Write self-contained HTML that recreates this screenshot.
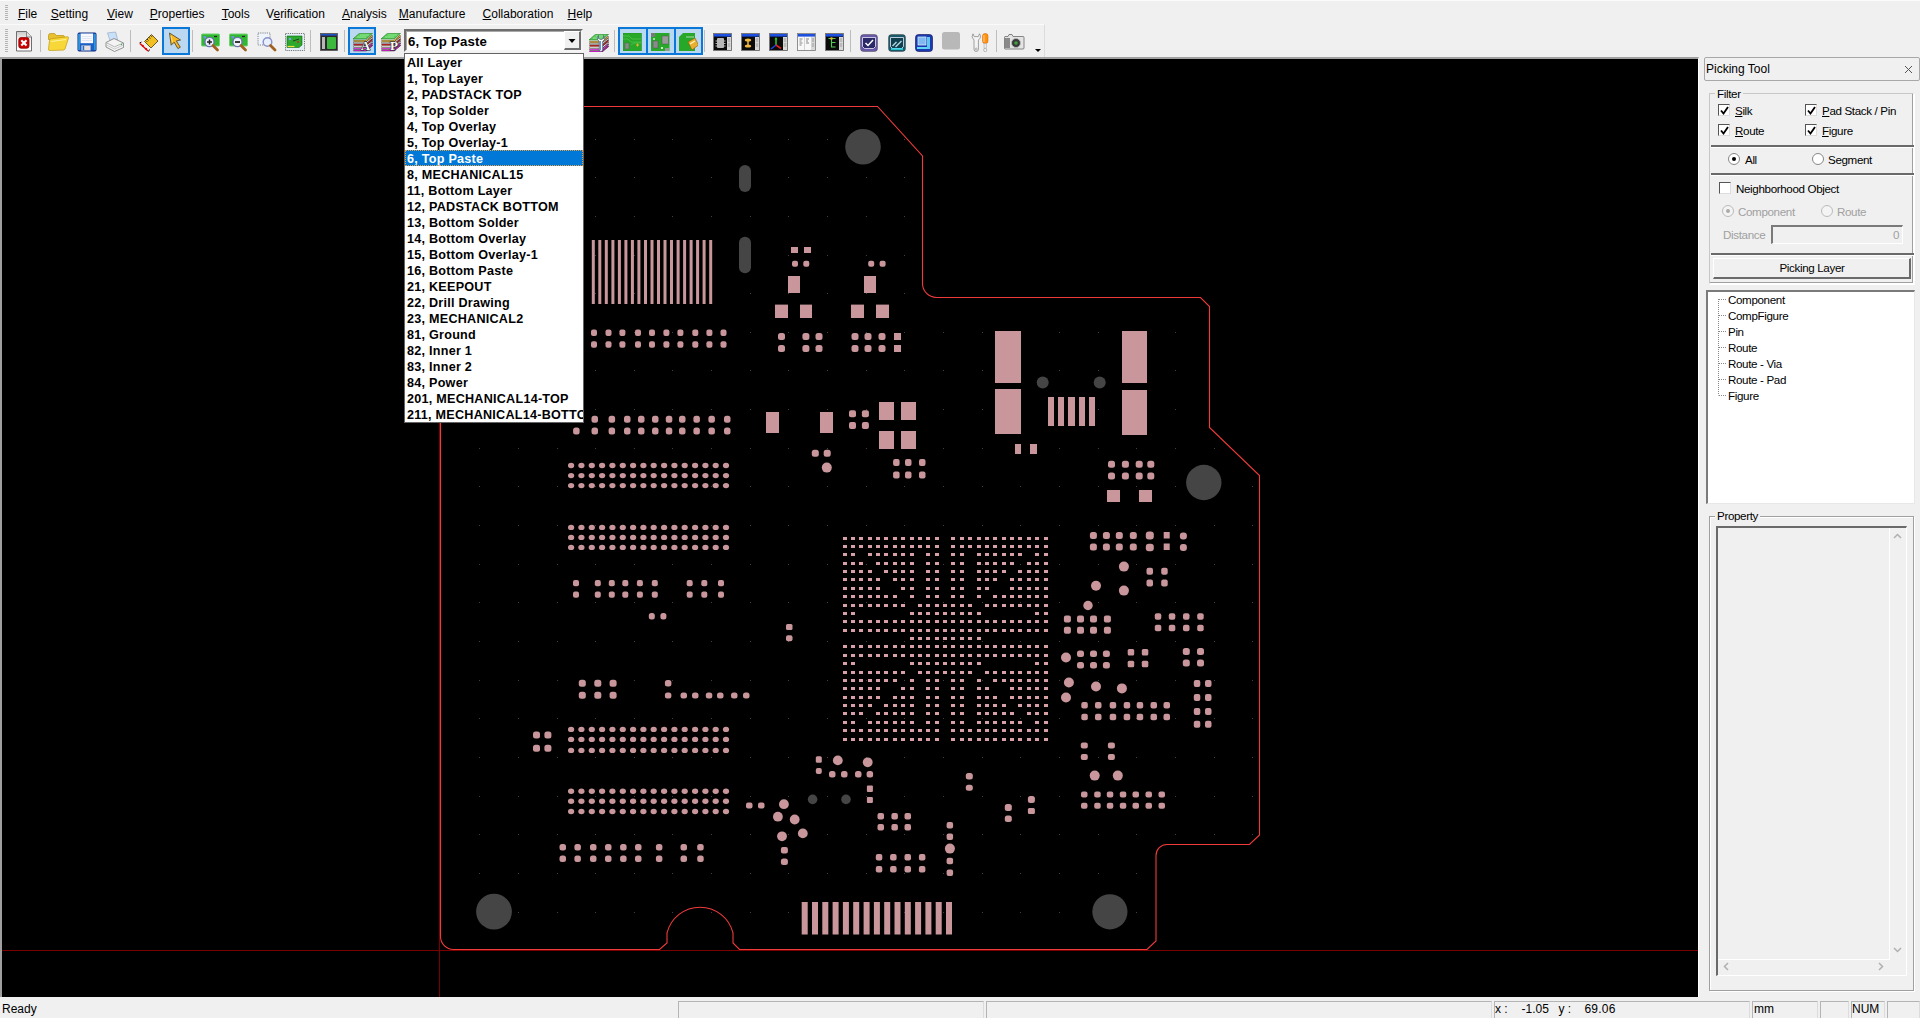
<!DOCTYPE html>
<html><head><meta charset="utf-8"><style>
*{box-sizing:border-box}
html,body{margin:0;padding:0;width:1920px;height:1018px;overflow:hidden;background:#f0f0f0;font-family:'Liberation Sans',sans-serif;}
.abs{position:absolute}
#menubar{position:absolute;left:0;top:0;width:1920px;height:24px;background:#f0f0f0;border-top:1px solid #fbfbfb}
.mi{position:absolute;top:6px;font-size:12px;color:#000;white-space:nowrap;line-height:15px}
.mi u{text-decoration:underline;text-underline-offset:1px}
.grip{position:absolute;left:5px;width:3px;border-top:none;background:repeating-linear-gradient(#b4b4b4 0 1px,transparent 1px 2px)}
#toolbar{position:absolute;left:0;top:24px;width:1045px;height:33px;background:#f0f0f0;border-top:1px solid #fafafa;border-right:1px solid #dcdcdc}
.sep{position:absolute;top:30px;width:1px;height:22px;background:#bdbdbd}
.selbtn{position:absolute;top:27px;height:28px;background:#bad8f2;border:2px solid #0a78d8}
.ic{position:absolute}
#combo{position:absolute;left:404px;top:29px;width:179px;height:23px;background:#fff;border:2px solid #f4f4f4;border-top-color:#6e6e6e;border-left-color:#6e6e6e;box-shadow:inset 1px 1px 0 #a8a8a8}
#combo .t{position:absolute;left:2px;top:3px;font-weight:bold;font-size:13.2px;letter-spacing:0.2px;color:#000;line-height:15px}
#combo .btn{position:absolute;right:0px;top:0px;width:17px;height:19px;background:#f0f0f0;border:1px solid #fff;border-right:2px solid #6e6e6e;border-bottom:2px solid #6e6e6e}
#canvas{position:absolute;left:0;top:57px;width:1699px;height:941px;background:#000;border-top:2px solid #a0a0a0;border-left:2px solid #a0a0a0;border-right:1px solid #fff;border-bottom:1px solid #fff}
#pcb{position:absolute;left:0;top:0}
#drop{position:absolute;left:404px;top:53px;width:180px;height:370px;background:#fff;border:1px solid #646464;overflow:hidden}
.li{position:absolute;left:0;width:178px;height:16px;padding-left:2px;padding-top:2px;font-weight:bold;font-size:12.6px;letter-spacing:0.25px;line-height:15px;color:#000;white-space:nowrap}
.li.sel{background:#0078d7;color:#fff;outline:1px dotted #e8a040;outline-offset:-1px}
#panel{position:absolute;left:1700px;top:57px;width:220px;height:940px;background:#f0f0f0}
.pt{position:absolute;font-size:11.6px;letter-spacing:-0.35px;color:#000;white-space:nowrap;line-height:14px}
.gray{color:#a0a0a0}
.cb{position:absolute;width:12px;height:12px;background:#fff;border:1px solid #333;border-color:#555 #ddd #ddd #555}
.rad{position:absolute;width:12px;height:12px;border-radius:50%;background:#fff;border:1px solid #888}
.hline{position:absolute;height:3px;background:#6a6a6a;border-bottom:1px solid #fff}
.ti{position:absolute;left:20px;margin-top:1px;letter-spacing:-0.35px;font-size:11.6px;line-height:14px;white-space:nowrap}
#status{position:absolute;left:0;top:997px;width:1920px;height:21px;background:#f0f0f0}
.sp{position:absolute;top:4px;height:17px;border:1px solid #b4b4b4;border-bottom:none;border-right-color:#dcdcdc}
.st{position:absolute;font-size:12px;line-height:14px;white-space:nowrap}
</style></head><body>
<div id="menubar"><div class="mi" style="left:17.900000000000002px"><u>F</u>ile</div><div class="mi" style="left:50.699999999999996px"><u>S</u>etting</div><div class="mi" style="left:107.0px"><u>V</u>iew</div><div class="mi" style="left:149.8px"><u>P</u>roperties</div><div class="mi" style="left:221.70000000000002px"><u>T</u>ools</div><div class="mi" style="left:266.1px">V<u>e</u>rification</div><div class="mi" style="left:342.0px"><u>A</u>nalysis</div><div class="mi" style="left:398.8px"><u>M</u>anufacture</div><div class="mi" style="left:482.6px"><u>C</u>ollaboration</div><div class="mi" style="left:567.5999999999999px"><u>H</u>elp</div></div>
<div class="grip" style="top:5px;height:16px"></div>
<div id="toolbar"></div>
<div class="grip" style="top:29px;height:23px"></div>
<div class="sep" style="left:40px"></div>
<div class="sep" style="left:130px"></div>
<div class="selbtn" style="left:162px;width:28px"></div>
<div class="sep" style="left:192px"></div>
<div class="sep" style="left:310px"></div>
<div class="sep" style="left:344px"></div>
<div class="selbtn" style="left:348px;width:28px"></div>
<div class="sep" style="left:614px"></div>
<div class="selbtn" style="left:618px;width:30px"></div>
<div class="selbtn" style="left:646px;width:30px"></div>
<div class="selbtn" style="left:674px;width:29px"></div>
<div class="sep" style="left:704px"></div>
<div class="sep" style="left:850px"></div>
<div class="sep" style="left:996px"></div>
<svg class="ic" style="left:15px;top:31px" width="18" height="21" viewBox="0 0 18 21"><defs><linearGradient id="pg" x1="0" y1="0" x2="0" y2="1"><stop offset="0" stop-color="#c8c8c8"/><stop offset=".4" stop-color="#f4f4f4"/><stop offset="1" stop-color="#ffffff"/></linearGradient></defs><path d="M1.5 .5h10l5 5.5v14H1.5z" fill="url(#pg)" stroke="#6e6e6e"/><path d="M11.5 .5v5.5h5" fill="#e0e0e0" stroke="#6e6e6e" stroke-width=".8"/><rect x="3.8" y="6.6" width="10.2" height="10.6" rx="2.2" fill="#d00000" stroke="#8a0000" stroke-width=".8"/><path d="M6.3 9.2l5.2 5.4M11.5 9.2l-5.2 5.4" stroke="#fff" stroke-width="2.1"/></svg><svg class="ic" style="left:47px;top:32px" width="22" height="19" viewBox="0 0 22 19"><path d="M1.5 3.5q0-2 2-2h4l2 2h6.5q1.5 0 1.5 1.5v2.5H1.5z" fill="#e8c030" stroke="#b89010" stroke-width=".7"/><path d="M2.5 8.5q.3-1.5 2-1.8l16-2q1.3 0 1 1.2L18 17q-.4 1-1.6 1.1L2.8 18.5q-1.5 0-1.3-1.5z" fill="#f8d838" stroke="#c09a10" stroke-width=".7"/><path d="M4 9.5l15-2" stroke="#fff4a0" stroke-width="1"/></svg><svg class="ic" style="left:77px;top:32px" width="20" height="20" viewBox="0 0 20 20"><rect x="1" y="1" width="18" height="18" rx="1" fill="#1a60c8" stroke="#0a2a80" stroke-width="1"/><path d="M2 2v16" stroke="#40c8f8" stroke-width="1"/><path d="M18 2v16" stroke="#40c8f8" stroke-width="1"/><rect x="3.6" y="1.5" width="12.5" height="9.7" fill="#f8f8ff"/><path d="M5 4.5h10M5 6.5h10M5 8.5h10" stroke="#d0d8e8" stroke-width=".6"/><rect x="4.3" y="13.4" width="9.4" height="5.1" fill="#e8e0e0" stroke="#7090c0" stroke-width=".5"/><rect x="5.6" y="14" width="1.6" height="4" fill="#2070d0"/></svg><svg class="ic" style="left:105px;top:31px" width="20" height="21" viewBox="0 0 20 21"><path d="M2.5 1.9L10.6 1l2 7.5-7.6 1z" fill="#c8e0f8" stroke="#8aa0c0" stroke-width=".6"/><path d="M1 11.5l8-4 9.5 4.5v4.5l-9 4-8.5-4.5z" fill="#f4f4f4" stroke="#7a7a7a" stroke-width=".8"/><path d="M1 11.5l8.5 4.3 9-3.8" fill="none" stroke="#9a9a9a" stroke-width=".7"/><path d="M1.5 14l8 4 9-4" fill="none" stroke="#b0b0b0" stroke-width=".6"/><circle cx="16.5" cy="13.5" r=".7" fill="#30c030"/></svg><svg class="ic" style="left:139px;top:31px" width="21" height="21" viewBox="0 0 21 21"><path d="M5.5 10.5l7-7 6.5 6.5-7 7z" fill="#f0c020" stroke="#4a3a10" stroke-width=".8"/><path d="M8 8l1.5 1.5M9.8 6.2l1.5 1.5M11.6 4.4l1.5 1.5M7.2 9.8l1.2 1.2" stroke="#222" stroke-width=".9"/><path d="M1 12.5l8 7.5" stroke="#e00000" stroke-width="1.4"/><path d="M.5 12l2-1M9.5 20.5l1-2" stroke="#400" stroke-width="1"/><circle cx="3.8" cy="14.8" r="1" fill="#e00000"/><circle cx="7.2" cy="18" r="1" fill="#e00000"/></svg><svg class="ic" style="left:167px;top:32px" width="18" height="18" viewBox="0 0 18 18"><path d="M2.5 1l11 7-4.2.9 4 6.3-2.4 1.4-3.7-6.4-3 3z" fill="#f8b820" stroke="#5a4a30" stroke-width=".9" stroke-linejoin="round"/><path d="M4 4l1.5 6" stroke="#ffe890" stroke-width=".8"/></svg><svg class="ic" style="left:200px;top:32px" width="21" height="21" viewBox="0 0 21 21"><rect x="1.5" y="2" width="18" height="12" rx="1" fill="#30b830" stroke="#70d070" stroke-width="1"/><rect x="3.5" y="4" width="2.5" height="2.5" fill="#7090e0"/><path d="M14 4.5h3" stroke="#222" stroke-width="1.2"/><circle cx="9.5" cy="10" r="4.6" fill="#eef2ff" stroke="#6a70b0" stroke-width="1.4"/><path d="M13 13.5l4.5 4.5" stroke="#a06020" stroke-width="2.8" stroke-linecap="round"/><path d="M7 10h5M9.5 7.5v5" stroke="#222" stroke-width="1.5"/></svg><svg class="ic" style="left:228px;top:32px" width="21" height="21" viewBox="0 0 21 21"><rect x="1.5" y="2" width="18" height="12" rx="1" fill="#30b830" stroke="#70d070" stroke-width="1"/><rect x="3.5" y="4" width="2.5" height="2.5" fill="#7090e0"/><path d="M14 4.5h3" stroke="#222" stroke-width="1.2"/><circle cx="9.5" cy="10" r="4.6" fill="#eef2ff" stroke="#6a70b0" stroke-width="1.4"/><path d="M13 13.5l4.5 4.5" stroke="#a06020" stroke-width="2.8" stroke-linecap="round"/><path d="M7 10h5" stroke="#222" stroke-width="1.8"/></svg><svg class="ic" style="left:257px;top:32px" width="21" height="21" viewBox="0 0 21 21"><rect x="1" y="1" width="12" height="12" fill="#eef4fc" stroke="#6a6a6a" stroke-width=".8" stroke-dasharray="1.2 1"/><circle cx="10.5" cy="10" r="4.3" fill="#e8f0ff" stroke="#8a90c8" stroke-width="1.4"/><path d="M13.5 13.5l4.5 4.5" stroke="#a06020" stroke-width="2.8" stroke-linecap="round"/></svg><svg class="ic" style="left:285px;top:33px" width="20" height="18" viewBox="0 0 20 18"><rect x=".5" y=".5" width="19" height="17" fill="#e4eef8" stroke="#555" stroke-width=".8" stroke-dasharray="1.2 1"/><path d="M2 3h15v9l-3 2.5H2z" fill="#2ca82c" stroke="#0a6a0a" stroke-width=".6"/><circle cx="5" cy="6" r="1.2" fill="#80a0f0"/><path d="M8 8l6-2" stroke="#222" stroke-width=".8"/><circle cx="13" cy="9" r="1" fill="#e02020"/><path d="M2.5 13.5h7" stroke="#f0e040" stroke-width="1.2"/></svg><svg class="ic" style="left:320px;top:33px" width="18" height="18" viewBox="0 0 18 18"><rect x=".5" y=".5" width="17" height="17" fill="#2a2a2a" stroke="#555" stroke-width=".8"/><rect x="1" y="1" width="16" height="1.6" fill="#2050c8"/><rect x="2" y="4" width="3" height="12" fill="#b8b8b8"/><rect x="7" y="4" width="9" height="12" rx="1" fill="#3cb83c"/></svg><svg class="ic" style="left:353px;top:33px" width="21" height="19" viewBox="0 0 21 19"><path d="M.5 17.5h12.5l6.5-5.5" fill="none" stroke="#3a2a2a" stroke-width="1.6"/><path d="M.8 17.5h12.2l6.3-5.3" fill="none" stroke="#c020c0" stroke-width="1"/><path d="M.5 15.6h12.5l6.5-5.5" fill="none" stroke="#3a2a2a" stroke-width="1.6"/><path d="M.8 15.6h12.2l6.3-5.3" fill="none" stroke="#e040e0" stroke-width="1"/><path d="M.5 13.7h12.5l6.5-5.5" fill="none" stroke="#3a2a2a" stroke-width="1.6"/><path d="M.8 13.7h12.2l6.3-5.3" fill="none" stroke="#f0f0f0" stroke-width="1"/><path d="M.5 11.8h12.5l6.5-5.5" fill="none" stroke="#3a2a2a" stroke-width="1.6"/><path d="M.8 11.8h12.2l6.3-5.3" fill="none" stroke="#e02020" stroke-width="1"/><path d="M.5 9.9h12.5l6.5-5.5" fill="none" stroke="#3a2a2a" stroke-width="1.6"/><path d="M.8 9.9h12.2l6.3-5.3" fill="none" stroke="#f0f0f0" stroke-width="1"/><path d="M.5 8.0h12.5l6.5-5.5" fill="none" stroke="#3a2a2a" stroke-width="1.6"/><path d="M.8 8.0h12.2l6.3-5.3" fill="none" stroke="#f0c020" stroke-width="1"/><path d="M0 6l6.6-5.8h13L13 6z" fill="#58d058" stroke="#2a7a2a" stroke-width=".7"/><path d="M4 4h9M7 2h9" stroke="#b8f0b8" stroke-width=".6"/><text x="7.8" y="17" font-family="Liberation Serif" font-weight="bold" font-size="13" fill="#fff" stroke="#222" stroke-width="1.2" paint-order="stroke">A</text></svg><svg class="ic" style="left:381px;top:33px" width="21" height="19" viewBox="0 0 21 19"><path d="M.5 17.5h12.5l6.5-5.5" fill="none" stroke="#3a2a2a" stroke-width="1.6"/><path d="M.8 17.5h12.2l6.3-5.3" fill="none" stroke="#c020c0" stroke-width="1"/><path d="M.5 15.6h12.5l6.5-5.5" fill="none" stroke="#3a2a2a" stroke-width="1.6"/><path d="M.8 15.6h12.2l6.3-5.3" fill="none" stroke="#e040e0" stroke-width="1"/><path d="M.5 13.7h12.5l6.5-5.5" fill="none" stroke="#3a2a2a" stroke-width="1.6"/><path d="M.8 13.7h12.2l6.3-5.3" fill="none" stroke="#f0f0f0" stroke-width="1"/><path d="M.5 11.8h12.5l6.5-5.5" fill="none" stroke="#3a2a2a" stroke-width="1.6"/><path d="M.8 11.8h12.2l6.3-5.3" fill="none" stroke="#e02020" stroke-width="1"/><path d="M.5 9.9h12.5l6.5-5.5" fill="none" stroke="#3a2a2a" stroke-width="1.6"/><path d="M.8 9.9h12.2l6.3-5.3" fill="none" stroke="#f0f0f0" stroke-width="1"/><path d="M.5 8.0h12.5l6.5-5.5" fill="none" stroke="#3a2a2a" stroke-width="1.6"/><path d="M.8 8.0h12.2l6.3-5.3" fill="none" stroke="#f0c020" stroke-width="1"/><path d="M0 6l6.6-5.8h13L13 6z" fill="#58d058" stroke="#2a7a2a" stroke-width=".7"/><path d="M4 4h9M7 2h9" stroke="#b8f0b8" stroke-width=".6"/><text x="9" y="17" font-family="Liberation Serif" font-weight="bold" font-size="13" fill="#fff" stroke="#222" stroke-width="1.2" paint-order="stroke">P</text></svg><svg class="ic" style="left:589px;top:34px" width="21" height="18" viewBox="0 0 21 18"><path d="M.5 17.5h12.5l6.5-5.5" fill="none" stroke="#3a2a2a" stroke-width="1.6"/><path d="M.8 17.5h12.2l6.3-5.3" fill="none" stroke="#c020c0" stroke-width="1"/><path d="M.5 15.6h12.5l6.5-5.5" fill="none" stroke="#3a2a2a" stroke-width="1.6"/><path d="M.8 15.6h12.2l6.3-5.3" fill="none" stroke="#e040e0" stroke-width="1"/><path d="M.5 13.7h12.5l6.5-5.5" fill="none" stroke="#3a2a2a" stroke-width="1.6"/><path d="M.8 13.7h12.2l6.3-5.3" fill="none" stroke="#f0f0f0" stroke-width="1"/><path d="M.5 11.8h12.5l6.5-5.5" fill="none" stroke="#3a2a2a" stroke-width="1.6"/><path d="M.8 11.8h12.2l6.3-5.3" fill="none" stroke="#e02020" stroke-width="1"/><path d="M.5 9.9h12.5l6.5-5.5" fill="none" stroke="#3a2a2a" stroke-width="1.6"/><path d="M.8 9.9h12.2l6.3-5.3" fill="none" stroke="#f0f0f0" stroke-width="1"/><path d="M.5 8.0h12.5l6.5-5.5" fill="none" stroke="#3a2a2a" stroke-width="1.6"/><path d="M.8 8.0h12.2l6.3-5.3" fill="none" stroke="#f0c020" stroke-width="1"/><path d="M0 6l6.6-5.8h13L13 6z" fill="#58d058" stroke="#2a7a2a" stroke-width=".7"/><path d="M4 4h9M7 2h9" stroke="#b8f0b8" stroke-width=".6"/><path d="M9.5 1.5q-2 1-1 4l1.8 2v8q0 2 1.7 2 1.7 0 1.7-2v-8l1.8-2q1-3-1-4v3l-2.5 1-2.5-1z" fill="#f8f8f8" stroke="#3a4a70" stroke-width=".7"/><path d="M11.5 7v9" stroke="#5a9ae0" stroke-width="1"/></svg><svg class="ic" style="left:623px;top:33px" width="19" height="18" viewBox="0 0 19 18"><rect x="0" y="0" width="18.5" height="18" fill="#28a828" stroke="#1a8a1a" stroke-width=".5"/><path d="M0 3h6l3 3h9M0 6h5l3 3h10M8 12l3-2h7" stroke="#50c850" stroke-width=".7" fill="none"/><rect x="2" y="10" width="4" height="6" fill="#8a8a8a" stroke="#555" stroke-width=".4"/><path d="M14.5 10.5v3M13 12h3" stroke="#f0b030" stroke-width="1"/></svg><svg class="ic" style="left:651px;top:33px" width="19" height="18" viewBox="0 0 19 18"><rect x="0" y="0" width="18.5" height="18" fill="#28a828"/><rect x="0" y="0" width="4" height="4" fill="#7a7a7a"/><rect x="11" y="3" width="6.5" height="8" fill="#9a9a9a" stroke="#555" stroke-width=".5"/><rect x="2" y="8" width="5" height="7" fill="#8a8a8a" stroke="#555" stroke-width=".5"/><circle cx="3" cy="6" r="1" fill="#c0f0c0"/><circle cx="11" cy="15" r="1" fill="#fff"/><rect x="14" y="15" width="4" height="3" fill="#9a9a9a"/></svg><svg class="ic" style="left:679px;top:33px" width="19" height="18" viewBox="0 0 19 18"><path d="M4 0h12v18H0V4z" fill="#28a828"/><path d="M7 4h8" stroke="#9ad09a" stroke-width="1.2"/><path d="M9 9l7-4 3.5 7-6.5 5z" fill="#e8b030" stroke="#8a5a10" stroke-width=".6"/><path d="M11 11l5-3" stroke="#fff6c0" stroke-width="1.3"/></svg><svg class="ic" style="left:713px;top:33px" width="19" height="18" viewBox="0 0 19 18"><rect x=".5" y=".5" width="18" height="17" fill="#0a0a0a" stroke="#777" stroke-width=".8"/><rect x="1" y="1" width="17" height="2.6" fill="#1e50e0"/><rect x="14" y="4" width="4" height="13" fill="#d8d8d8"/><path d="M14.8 6h2.4M14.8 8h2.4M14.8 11h2.4M14.8 13h2.4" stroke="#777" stroke-width=".6"/><rect x="4" y="5" width="7" height="10" rx="1" fill="#b8b8b8"/><path d="M2.5 8h1.5M2.5 10.5h1.5M2.5 13h1.5M11 8h1.5M11 10.5h1.5M11 13h1.5" stroke="#ddd" stroke-width=".8"/></svg><svg class="ic" style="left:741px;top:33px" width="19" height="18" viewBox="0 0 19 18"><rect x=".5" y=".5" width="18" height="17" fill="#0a0a0a" stroke="#777" stroke-width=".8"/><rect x="1" y="1" width="17" height="2.6" fill="#1e50e0"/><rect x="14" y="4" width="4" height="13" fill="#d8d8d8"/><path d="M14.8 6h2.4M14.8 8h2.4M14.8 11h2.4M14.8 13h2.4" stroke="#777" stroke-width=".6"/><ellipse cx="7" cy="7" rx="3.2" ry="1.6" fill="#f0b840"/><ellipse cx="7" cy="13" rx="3.2" ry="1.6" fill="#f0b840"/><path d="M7 8v4" stroke="#f0b840" stroke-width="1.5"/></svg><svg class="ic" style="left:769px;top:33px" width="19" height="18" viewBox="0 0 19 18"><rect x=".5" y=".5" width="18" height="17" fill="#0a0a0a" stroke="#777" stroke-width=".8"/><rect x="1" y="1" width="17" height="2.6" fill="#1e50e0"/><rect x="14" y="4" width="4" height="13" fill="#d8d8d8"/><path d="M14.8 6h2.4M14.8 8h2.4M14.8 11h2.4M14.8 13h2.4" stroke="#777" stroke-width=".6"/><path d="M7 12V5" stroke="#30c030" stroke-width="1.6"/><path d="M5.5 6.5L7 4l1.5 2.5z" fill="#30c030"/><path d="M7 12l-5 4" stroke="#2040e0" stroke-width="1.6"/><path d="M7 12l5 3.5" stroke="#e02020" stroke-width="1.6"/></svg><svg class="ic" style="left:797px;top:33px" width="19" height="18" viewBox="0 0 19 18"><rect x=".5" y=".5" width="18" height="17" fill="#f0f0f0" stroke="#777" stroke-width=".8"/><rect x="1" y="1" width="17" height="2.6" fill="#1e50e0"/><rect x="14" y="4" width="4" height="13" fill="#d8d8d8"/><path d="M14.8 6h2.4M14.8 8h2.4M14.8 11h2.4M14.8 13h2.4" stroke="#777" stroke-width=".6"/><rect x="1" y="4" width="13" height="13" fill="#f8f8f8"/><path d="M7.5 4v13" stroke="#bbb" stroke-width=".6"/><path d="M2.5 6h3M2.5 8h2M2.5 10h3M2.5 12h2M9 6h3M9 8h2M9 10h3" stroke="#555" stroke-width=".7"/></svg><svg class="ic" style="left:825px;top:33px" width="19" height="18" viewBox="0 0 19 18"><rect x=".5" y=".5" width="18" height="17" fill="#0a0a0a" stroke="#777" stroke-width=".8"/><rect x="1" y="1" width="17" height="2.6" fill="#1e50e0"/><rect x="14" y="4" width="4" height="13" fill="#d8d8d8"/><path d="M14.8 6h2.4M14.8 8h2.4M14.8 11h2.4M14.8 13h2.4" stroke="#777" stroke-width=".6"/><path d="M3.5 5.5h7M6.5 5.5v9M6.5 9.5h4M6.5 14h4" stroke="#50d050" stroke-width="1.1" fill="none"/><circle cx="6.5" cy="5.5" r="1.3" fill="#f0b030"/></svg><svg class="ic" style="left:860px;top:34px" width="18" height="18" viewBox="0 0 18 18"><rect x=".5" y=".5" width="17" height="17" rx="3" fill="#6a58a8" stroke="#333" stroke-width=".4"/><path d="M2.5 3.5h13v9l-2 2h-9l-2-2z" fill="#2a2a68" stroke="#e8e8f8" stroke-width=".8"/><path d="M5.5 9l2.5 2.5 5-5.5" stroke="#fff" stroke-width="1.5" fill="none"/></svg><svg class="ic" style="left:888px;top:34px" width="18" height="18" viewBox="0 0 18 18"><rect x=".5" y=".5" width="17" height="17" rx="3" fill="#1a5a68" stroke="#333" stroke-width=".4"/><path d="M2.5 3.5h13v9l-2 2h-9l-2-2z" fill="#104050" stroke="#e8e8f8" stroke-width=".8"/><path d="M4.5 12l4-4M7.5 13l6-6" stroke="#b0d8e0" stroke-width="1.4"/><path d="M3 15h12" stroke="#30e0f0" stroke-width="1.5"/></svg><svg class="ic" style="left:915px;top:34px" width="18" height="18" viewBox="0 0 18 18"><rect x=".5" y=".5" width="17" height="17" rx="3" fill="#1a3ab0" stroke="#0a0a50" stroke-width=".6"/><rect x="3" y="3" width="8" height="8" fill="#80b8f0" stroke="#d0e8ff" stroke-width=".8"/><rect x="12" y="3" width="3" height="12" fill="#60c8f0"/><path d="M2 14h10" stroke="#60d8f8" stroke-width="2"/></svg><svg class="ic" style="left:942px;top:32px" width="18" height="18" viewBox="0 0 18 18"><rect x="0" y="0" width="18" height="17.5" rx="2.5" fill="#b8b8b8"/></svg><svg class="ic" style="left:971px;top:33px" width="19" height="19" viewBox="0 0 19 19"><path d="M2 .8Q-.5 4 3 7v9q0 2.5 2.2 2.5T7.4 16V7Q11 4 8.5.8L7.3 3.6H3.2z" fill="#f4f4f4" stroke="#8a8a8a" stroke-width=".8"/><circle cx="5.2" cy="16" r="1" fill="none" stroke="#888" stroke-width=".6"/><rect x="11.5" y=".5" width="5.5" height="10" rx="2.5" fill="#ff9010" stroke="#d06000" stroke-width=".5"/><path d="M13 2v7" stroke="#ffd080" stroke-width="1"/><rect x="13" y="10.5" width="2.5" height="5" fill="#e8e8e8" stroke="#999" stroke-width=".4"/><ellipse cx="14.2" cy="17" rx="1.6" ry="1.8" fill="#f0f0f0" stroke="#888" stroke-width=".5"/></svg><svg class="ic" style="left:1004px;top:33px" width="21" height="17" viewBox="0 0 21 17"><path d="M1 3.5h3l1-2h3l1 2h10q1 0 1 1V15q0 1-1 1H1q-.5 0-.5-1V4.5q0-1 .5-1z" fill="#e4e4e4" stroke="#6a6a6a" stroke-width=".8"/><rect x="1" y="5" width="5" height="10" fill="#8a8a8a"/><circle cx="12" cy="10" r="4.5" fill="#3a3a3a" stroke="#bbb" stroke-width=".8"/><circle cx="12" cy="10" r="1.8" fill="#40a040"/></svg>
<svg class="ic" style="left:1035px;top:49px" width="6" height="4"><path d="M0 0h6L3 3z" fill="#000"/></svg>
<div id="combo"><div class="t">6, Top Paste</div><div class="btn"><svg width="15" height="16" style="position:absolute;left:0;top:0"><path d="M3.5 7h7l-3.5 4z" fill="#000"/></svg></div></div>
<div id="canvas"></div>
<svg id="pcb" width="1920" height="1018" style="position:absolute;left:0;top:0">
<path d="M2 950.5H1698" stroke="#7a0000" stroke-width="1"/>
<path d="M439.5 59V997" stroke="#7a0000" stroke-width="1"/>
<path d="M479 912h1v1h-1z M479 873h1v1h-1z M479 834h1v1h-1z M479 796h1v1h-1z M479 757h1v1h-1z M479 718h1v1h-1z M479 680h1v1h-1z M479 641h1v1h-1z M479 602h1v1h-1z M479 564h1v1h-1z M479 525h1v1h-1z M479 486h1v1h-1z M479 448h1v1h-1z M479 409h1v1h-1z M479 370h1v1h-1z M479 332h1v1h-1z M479 293h1v1h-1z M479 255h1v1h-1z M479 216h1v1h-1z M479 177h1v1h-1z M479 139h1v1h-1z M518 912h1v1h-1z M518 873h1v1h-1z M518 834h1v1h-1z M518 796h1v1h-1z M518 757h1v1h-1z M518 718h1v1h-1z M518 680h1v1h-1z M518 641h1v1h-1z M518 602h1v1h-1z M518 564h1v1h-1z M518 525h1v1h-1z M518 486h1v1h-1z M518 448h1v1h-1z M518 409h1v1h-1z M518 370h1v1h-1z M518 332h1v1h-1z M518 293h1v1h-1z M518 255h1v1h-1z M518 216h1v1h-1z M518 177h1v1h-1z M518 139h1v1h-1z M557 912h1v1h-1z M557 873h1v1h-1z M557 834h1v1h-1z M557 796h1v1h-1z M557 757h1v1h-1z M557 718h1v1h-1z M557 680h1v1h-1z M557 641h1v1h-1z M557 602h1v1h-1z M557 564h1v1h-1z M557 525h1v1h-1z M557 486h1v1h-1z M557 448h1v1h-1z M557 409h1v1h-1z M557 370h1v1h-1z M557 332h1v1h-1z M557 293h1v1h-1z M557 255h1v1h-1z M557 216h1v1h-1z M557 177h1v1h-1z M557 139h1v1h-1z M595 912h1v1h-1z M595 873h1v1h-1z M595 834h1v1h-1z M595 796h1v1h-1z M595 757h1v1h-1z M595 718h1v1h-1z M595 680h1v1h-1z M595 641h1v1h-1z M595 602h1v1h-1z M595 564h1v1h-1z M595 525h1v1h-1z M595 486h1v1h-1z M595 448h1v1h-1z M595 409h1v1h-1z M595 370h1v1h-1z M595 332h1v1h-1z M595 293h1v1h-1z M595 255h1v1h-1z M595 216h1v1h-1z M595 177h1v1h-1z M595 139h1v1h-1z M634 912h1v1h-1z M634 873h1v1h-1z M634 834h1v1h-1z M634 796h1v1h-1z M634 757h1v1h-1z M634 718h1v1h-1z M634 680h1v1h-1z M634 641h1v1h-1z M634 602h1v1h-1z M634 564h1v1h-1z M634 525h1v1h-1z M634 486h1v1h-1z M634 448h1v1h-1z M634 409h1v1h-1z M634 370h1v1h-1z M634 332h1v1h-1z M634 293h1v1h-1z M634 255h1v1h-1z M634 216h1v1h-1z M634 177h1v1h-1z M634 139h1v1h-1z M672 912h1v1h-1z M672 873h1v1h-1z M672 834h1v1h-1z M672 796h1v1h-1z M672 757h1v1h-1z M672 718h1v1h-1z M672 680h1v1h-1z M672 641h1v1h-1z M672 602h1v1h-1z M672 564h1v1h-1z M672 525h1v1h-1z M672 486h1v1h-1z M672 448h1v1h-1z M672 409h1v1h-1z M672 370h1v1h-1z M672 332h1v1h-1z M672 293h1v1h-1z M672 255h1v1h-1z M672 216h1v1h-1z M672 177h1v1h-1z M672 139h1v1h-1z M711 912h1v1h-1z M711 873h1v1h-1z M711 834h1v1h-1z M711 796h1v1h-1z M711 757h1v1h-1z M711 718h1v1h-1z M711 680h1v1h-1z M711 641h1v1h-1z M711 602h1v1h-1z M711 564h1v1h-1z M711 525h1v1h-1z M711 486h1v1h-1z M711 448h1v1h-1z M711 409h1v1h-1z M711 370h1v1h-1z M711 332h1v1h-1z M711 293h1v1h-1z M711 255h1v1h-1z M711 216h1v1h-1z M711 177h1v1h-1z M711 139h1v1h-1z M750 912h1v1h-1z M750 873h1v1h-1z M750 834h1v1h-1z M750 796h1v1h-1z M750 757h1v1h-1z M750 718h1v1h-1z M750 680h1v1h-1z M750 641h1v1h-1z M750 602h1v1h-1z M750 564h1v1h-1z M750 525h1v1h-1z M750 486h1v1h-1z M750 448h1v1h-1z M750 409h1v1h-1z M750 370h1v1h-1z M750 332h1v1h-1z M750 293h1v1h-1z M750 255h1v1h-1z M750 216h1v1h-1z M750 177h1v1h-1z M750 139h1v1h-1z M788 912h1v1h-1z M788 873h1v1h-1z M788 834h1v1h-1z M788 796h1v1h-1z M788 757h1v1h-1z M788 718h1v1h-1z M788 680h1v1h-1z M788 641h1v1h-1z M788 602h1v1h-1z M788 564h1v1h-1z M788 525h1v1h-1z M788 486h1v1h-1z M788 448h1v1h-1z M788 409h1v1h-1z M788 370h1v1h-1z M788 332h1v1h-1z M788 293h1v1h-1z M788 255h1v1h-1z M788 216h1v1h-1z M788 177h1v1h-1z M788 139h1v1h-1z M827 912h1v1h-1z M827 873h1v1h-1z M827 834h1v1h-1z M827 796h1v1h-1z M827 757h1v1h-1z M827 718h1v1h-1z M827 680h1v1h-1z M827 641h1v1h-1z M827 602h1v1h-1z M827 564h1v1h-1z M827 525h1v1h-1z M827 486h1v1h-1z M827 448h1v1h-1z M827 409h1v1h-1z M827 370h1v1h-1z M827 332h1v1h-1z M827 293h1v1h-1z M827 255h1v1h-1z M827 216h1v1h-1z M827 177h1v1h-1z M827 139h1v1h-1z M866 912h1v1h-1z M866 873h1v1h-1z M866 834h1v1h-1z M866 796h1v1h-1z M866 757h1v1h-1z M866 718h1v1h-1z M866 680h1v1h-1z M866 641h1v1h-1z M866 602h1v1h-1z M866 564h1v1h-1z M866 525h1v1h-1z M866 486h1v1h-1z M866 448h1v1h-1z M866 409h1v1h-1z M866 370h1v1h-1z M866 332h1v1h-1z M866 293h1v1h-1z M866 255h1v1h-1z M866 216h1v1h-1z M866 177h1v1h-1z M866 139h1v1h-1z M904 912h1v1h-1z M904 873h1v1h-1z M904 834h1v1h-1z M904 796h1v1h-1z M904 757h1v1h-1z M904 718h1v1h-1z M904 680h1v1h-1z M904 641h1v1h-1z M904 602h1v1h-1z M904 564h1v1h-1z M904 525h1v1h-1z M904 486h1v1h-1z M904 448h1v1h-1z M904 409h1v1h-1z M904 370h1v1h-1z M904 332h1v1h-1z M904 293h1v1h-1z M904 255h1v1h-1z M904 216h1v1h-1z M904 177h1v1h-1z M904 139h1v1h-1z M943 912h1v1h-1z M943 873h1v1h-1z M943 834h1v1h-1z M943 796h1v1h-1z M943 757h1v1h-1z M943 718h1v1h-1z M943 680h1v1h-1z M943 641h1v1h-1z M943 602h1v1h-1z M943 564h1v1h-1z M943 525h1v1h-1z M943 486h1v1h-1z M943 448h1v1h-1z M943 409h1v1h-1z M943 370h1v1h-1z M943 332h1v1h-1z M982 912h1v1h-1z M982 873h1v1h-1z M982 834h1v1h-1z M982 796h1v1h-1z M982 757h1v1h-1z M982 718h1v1h-1z M982 680h1v1h-1z M982 641h1v1h-1z M982 602h1v1h-1z M982 564h1v1h-1z M982 525h1v1h-1z M982 486h1v1h-1z M982 448h1v1h-1z M982 409h1v1h-1z M982 370h1v1h-1z M982 332h1v1h-1z M1020 912h1v1h-1z M1020 873h1v1h-1z M1020 834h1v1h-1z M1020 796h1v1h-1z M1020 757h1v1h-1z M1020 718h1v1h-1z M1020 680h1v1h-1z M1020 641h1v1h-1z M1020 602h1v1h-1z M1020 564h1v1h-1z M1020 525h1v1h-1z M1020 486h1v1h-1z M1020 448h1v1h-1z M1020 409h1v1h-1z M1020 370h1v1h-1z M1020 332h1v1h-1z M1059 912h1v1h-1z M1059 873h1v1h-1z M1059 834h1v1h-1z M1059 796h1v1h-1z M1059 757h1v1h-1z M1059 718h1v1h-1z M1059 680h1v1h-1z M1059 641h1v1h-1z M1059 602h1v1h-1z M1059 564h1v1h-1z M1059 525h1v1h-1z M1059 486h1v1h-1z M1059 448h1v1h-1z M1059 409h1v1h-1z M1059 370h1v1h-1z M1059 332h1v1h-1z M1098 912h1v1h-1z M1098 873h1v1h-1z M1098 834h1v1h-1z M1098 796h1v1h-1z M1098 757h1v1h-1z M1098 718h1v1h-1z M1098 680h1v1h-1z M1098 641h1v1h-1z M1098 602h1v1h-1z M1098 564h1v1h-1z M1098 525h1v1h-1z M1098 486h1v1h-1z M1098 448h1v1h-1z M1098 409h1v1h-1z M1098 370h1v1h-1z M1098 332h1v1h-1z M1136 912h1v1h-1z M1136 873h1v1h-1z M1136 834h1v1h-1z M1136 796h1v1h-1z M1136 757h1v1h-1z M1136 718h1v1h-1z M1136 680h1v1h-1z M1136 641h1v1h-1z M1136 602h1v1h-1z M1136 564h1v1h-1z M1136 525h1v1h-1z M1136 486h1v1h-1z M1136 448h1v1h-1z M1136 409h1v1h-1z M1136 370h1v1h-1z M1136 332h1v1h-1z M1175 834h1v1h-1z M1175 796h1v1h-1z M1175 757h1v1h-1z M1175 718h1v1h-1z M1175 680h1v1h-1z M1175 641h1v1h-1z M1175 602h1v1h-1z M1175 564h1v1h-1z M1175 525h1v1h-1z M1175 486h1v1h-1z M1175 448h1v1h-1z M1175 409h1v1h-1z M1175 370h1v1h-1z M1175 332h1v1h-1z M1214 834h1v1h-1z M1214 796h1v1h-1z M1214 757h1v1h-1z M1214 718h1v1h-1z M1214 680h1v1h-1z M1214 641h1v1h-1z M1214 602h1v1h-1z M1214 564h1v1h-1z M1214 525h1v1h-1z M1214 486h1v1h-1z M1214 448h1v1h-1z M1252 834h1v1h-1z M1252 796h1v1h-1z M1252 757h1v1h-1z M1252 718h1v1h-1z M1252 680h1v1h-1z M1252 641h1v1h-1z M1252 602h1v1h-1z M1252 564h1v1h-1z M1252 525h1v1h-1z M1252 486h1v1h-1z" fill="#404040" shape-rendering="crispEdges"/>
<circle cx="863.0" cy="146.7" r="17.8" fill="#454545"/>
<circle cx="494.0" cy="911.6" r="17.9" fill="#454545"/>
<circle cx="1109.9" cy="911.8" r="17.6" fill="#454545"/>
<circle cx="1203.8" cy="482.5" r="17.7" fill="#454545"/>
<rect x="739.0" y="165.0" width="12.0" height="27.0" rx="6" fill="#454545"/>
<rect x="739.0" y="236.8" width="12.0" height="36.5" rx="6" fill="#454545"/>
<circle cx="1042.7" cy="382.6" r="6.0" fill="#454545"/>
<circle cx="1099.7" cy="382.6" r="6.0" fill="#454545"/>
<circle cx="812.6" cy="799.4" r="4.8" fill="#454545"/>
<circle cx="846.0" cy="799.4" r="4.8" fill="#454545"/>
<rect x="591.8" y="240.0" width="3.0" height="64.0" fill="#c9979b"/>
<rect x="598.3" y="240.0" width="3.0" height="64.0" fill="#c9979b"/>
<rect x="604.8" y="240.0" width="3.0" height="64.0" fill="#c9979b"/>
<rect x="611.4" y="240.0" width="3.0" height="64.0" fill="#c9979b"/>
<rect x="617.9" y="240.0" width="3.0" height="64.0" fill="#c9979b"/>
<rect x="624.4" y="240.0" width="3.0" height="64.0" fill="#c9979b"/>
<rect x="630.9" y="240.0" width="3.0" height="64.0" fill="#c9979b"/>
<rect x="637.4" y="240.0" width="3.0" height="64.0" fill="#c9979b"/>
<rect x="644.0" y="240.0" width="3.0" height="64.0" fill="#c9979b"/>
<rect x="650.5" y="240.0" width="3.0" height="64.0" fill="#c9979b"/>
<rect x="657.0" y="240.0" width="3.0" height="64.0" fill="#c9979b"/>
<rect x="663.5" y="240.0" width="3.0" height="64.0" fill="#c9979b"/>
<rect x="670.0" y="240.0" width="3.0" height="64.0" fill="#c9979b"/>
<rect x="676.6" y="240.0" width="3.0" height="64.0" fill="#c9979b"/>
<rect x="683.1" y="240.0" width="3.0" height="64.0" fill="#c9979b"/>
<rect x="689.6" y="240.0" width="3.0" height="64.0" fill="#c9979b"/>
<rect x="696.1" y="240.0" width="3.0" height="64.0" fill="#c9979b"/>
<rect x="702.6" y="240.0" width="3.0" height="64.0" fill="#c9979b"/>
<rect x="709.2" y="240.0" width="3.0" height="64.0" fill="#c9979b"/>
<rect x="801.7" y="902.0" width="6.0" height="32.5" fill="#c9979b"/>
<rect x="812.0" y="902.0" width="6.0" height="32.5" fill="#c9979b"/>
<rect x="822.3" y="902.0" width="6.0" height="32.5" fill="#c9979b"/>
<rect x="832.6" y="902.0" width="6.0" height="32.5" fill="#c9979b"/>
<rect x="842.9" y="902.0" width="6.0" height="32.5" fill="#c9979b"/>
<rect x="853.2" y="902.0" width="6.0" height="32.5" fill="#c9979b"/>
<rect x="863.6" y="902.0" width="6.0" height="32.5" fill="#c9979b"/>
<rect x="873.9" y="902.0" width="6.0" height="32.5" fill="#c9979b"/>
<rect x="884.2" y="902.0" width="6.0" height="32.5" fill="#c9979b"/>
<rect x="894.5" y="902.0" width="6.0" height="32.5" fill="#c9979b"/>
<rect x="904.8" y="902.0" width="6.0" height="32.5" fill="#c9979b"/>
<rect x="915.1" y="902.0" width="6.0" height="32.5" fill="#c9979b"/>
<rect x="925.4" y="902.0" width="6.0" height="32.5" fill="#c9979b"/>
<rect x="935.7" y="902.0" width="6.0" height="32.5" fill="#c9979b"/>
<rect x="946.0" y="902.0" width="6.0" height="32.5" fill="#c9979b"/>
<rect x="1048.0" y="397.0" width="6.0" height="29.0" fill="#c9979b"/>
<rect x="1058.0" y="397.0" width="6.0" height="29.0" fill="#c9979b"/>
<rect x="1068.0" y="397.0" width="7.0" height="29.0" fill="#c9979b"/>
<rect x="1079.0" y="397.0" width="6.0" height="29.0" fill="#c9979b"/>
<rect x="1089.0" y="397.0" width="6.0" height="29.0" fill="#c9979b"/>
<rect x="995.0" y="331.0" width="26.0" height="52.0" fill="#c9979b"/>
<rect x="995.0" y="389.0" width="26.0" height="45.0" fill="#c9979b"/>
<rect x="1122.0" y="331.0" width="25.0" height="52.0" fill="#c9979b"/>
<rect x="1122.0" y="390.0" width="25.0" height="45.0" fill="#c9979b"/>
<rect x="1015.0" y="444.0" width="6.0" height="10.0" fill="#c9979b"/>
<rect x="1030.0" y="444.0" width="7.0" height="10.0" fill="#c9979b"/>
<rect x="591.0" y="329.6" width="6.0" height="6.5" rx="2" fill="#c9979b"/>
<rect x="591.0" y="341.2" width="6.0" height="6.5" rx="2" fill="#c9979b"/>
<rect x="605.5" y="329.6" width="6.0" height="6.5" rx="2" fill="#c9979b"/>
<rect x="605.5" y="341.2" width="6.0" height="6.5" rx="2" fill="#c9979b"/>
<rect x="619.4" y="329.6" width="6.0" height="6.5" rx="2" fill="#c9979b"/>
<rect x="619.4" y="341.2" width="6.0" height="6.5" rx="2" fill="#c9979b"/>
<rect x="635.0" y="329.6" width="6.0" height="6.5" rx="2" fill="#c9979b"/>
<rect x="635.0" y="341.2" width="6.0" height="6.5" rx="2" fill="#c9979b"/>
<rect x="649.0" y="329.6" width="6.0" height="6.5" rx="2" fill="#c9979b"/>
<rect x="649.0" y="341.2" width="6.0" height="6.5" rx="2" fill="#c9979b"/>
<rect x="663.4" y="329.6" width="6.0" height="6.5" rx="2" fill="#c9979b"/>
<rect x="663.4" y="341.2" width="6.0" height="6.5" rx="2" fill="#c9979b"/>
<rect x="677.4" y="329.6" width="6.0" height="6.5" rx="2" fill="#c9979b"/>
<rect x="677.4" y="341.2" width="6.0" height="6.5" rx="2" fill="#c9979b"/>
<rect x="692.3" y="329.6" width="6.0" height="6.5" rx="2" fill="#c9979b"/>
<rect x="692.3" y="341.2" width="6.0" height="6.5" rx="2" fill="#c9979b"/>
<rect x="706.4" y="329.6" width="6.0" height="6.5" rx="2" fill="#c9979b"/>
<rect x="706.4" y="341.2" width="6.0" height="6.5" rx="2" fill="#c9979b"/>
<rect x="720.5" y="329.6" width="6.0" height="6.5" rx="2" fill="#c9979b"/>
<rect x="720.5" y="341.2" width="6.0" height="6.5" rx="2" fill="#c9979b"/>
<rect x="791.0" y="247.0" width="7.0" height="6.0" fill="#c9979b"/>
<rect x="804.0" y="247.0" width="7.0" height="6.0" fill="#c9979b"/>
<rect x="792.0" y="260.8" width="6.0" height="6.0" rx="2" fill="#c9979b"/>
<rect x="803.3" y="260.8" width="6.0" height="6.0" rx="2" fill="#c9979b"/>
<rect x="788.0" y="276.0" width="12.0" height="17.0" fill="#c9979b"/>
<rect x="775.0" y="304.6" width="13.0" height="13.4" fill="#c9979b"/>
<rect x="800.0" y="304.6" width="12.0" height="13.4" fill="#c9979b"/>
<rect x="778.0" y="333.1" width="7.0" height="7.0" rx="2.5" fill="#c9979b"/>
<rect x="778.0" y="344.9" width="7.0" height="7.0" rx="2.5" fill="#c9979b"/>
<rect x="802.4" y="333.1" width="7.0" height="7.0" rx="2.5" fill="#c9979b"/>
<rect x="802.4" y="344.9" width="7.0" height="7.0" rx="2.5" fill="#c9979b"/>
<rect x="815.5" y="333.1" width="7.0" height="7.0" rx="2.5" fill="#c9979b"/>
<rect x="815.5" y="344.9" width="7.0" height="7.0" rx="2.5" fill="#c9979b"/>
<rect x="868.2" y="260.8" width="6.0" height="6.0" rx="2" fill="#c9979b"/>
<rect x="879.6" y="260.8" width="6.0" height="6.0" rx="2" fill="#c9979b"/>
<rect x="864.0" y="276.0" width="12.0" height="17.0" fill="#c9979b"/>
<rect x="851.0" y="304.6" width="13.0" height="13.4" fill="#c9979b"/>
<rect x="876.0" y="304.6" width="13.0" height="13.4" fill="#c9979b"/>
<rect x="851.5" y="333.1" width="7.0" height="7.0" rx="2.5" fill="#c9979b"/>
<rect x="851.5" y="344.9" width="7.0" height="7.0" rx="2.5" fill="#c9979b"/>
<rect x="864.5" y="333.1" width="7.0" height="7.0" rx="2.5" fill="#c9979b"/>
<rect x="864.5" y="344.9" width="7.0" height="7.0" rx="2.5" fill="#c9979b"/>
<rect x="878.5" y="333.1" width="7.0" height="7.0" rx="2.5" fill="#c9979b"/>
<rect x="878.5" y="344.9" width="7.0" height="7.0" rx="2.5" fill="#c9979b"/>
<rect x="894.0" y="333.0" width="7.0" height="7.0" fill="#c9979b"/>
<rect x="894.0" y="345.0" width="7.0" height="7.0" fill="#c9979b"/>
<rect x="591.5" y="415.8" width="6.5" height="7.0" rx="2.5" fill="#c9979b"/>
<rect x="591.5" y="427.5" width="6.5" height="7.0" rx="2.5" fill="#c9979b"/>
<rect x="608.6" y="415.8" width="6.5" height="7.0" rx="2.5" fill="#c9979b"/>
<rect x="608.6" y="427.5" width="6.5" height="7.0" rx="2.5" fill="#c9979b"/>
<rect x="624.0" y="415.8" width="6.5" height="7.0" rx="2.5" fill="#c9979b"/>
<rect x="624.0" y="427.5" width="6.5" height="7.0" rx="2.5" fill="#c9979b"/>
<rect x="638.0" y="415.8" width="6.5" height="7.0" rx="2.5" fill="#c9979b"/>
<rect x="638.0" y="427.5" width="6.5" height="7.0" rx="2.5" fill="#c9979b"/>
<rect x="652.0" y="415.8" width="6.5" height="7.0" rx="2.5" fill="#c9979b"/>
<rect x="652.0" y="427.5" width="6.5" height="7.0" rx="2.5" fill="#c9979b"/>
<rect x="665.8" y="415.8" width="6.5" height="7.0" rx="2.5" fill="#c9979b"/>
<rect x="665.8" y="427.5" width="6.5" height="7.0" rx="2.5" fill="#c9979b"/>
<rect x="679.0" y="415.8" width="6.5" height="7.0" rx="2.5" fill="#c9979b"/>
<rect x="679.0" y="427.5" width="6.5" height="7.0" rx="2.5" fill="#c9979b"/>
<rect x="693.4" y="415.8" width="6.5" height="7.0" rx="2.5" fill="#c9979b"/>
<rect x="693.4" y="427.5" width="6.5" height="7.0" rx="2.5" fill="#c9979b"/>
<rect x="708.4" y="415.8" width="6.5" height="7.0" rx="2.5" fill="#c9979b"/>
<rect x="708.4" y="427.5" width="6.5" height="7.0" rx="2.5" fill="#c9979b"/>
<rect x="724.0" y="415.8" width="6.5" height="7.0" rx="2.5" fill="#c9979b"/>
<rect x="724.0" y="427.5" width="6.5" height="7.0" rx="2.5" fill="#c9979b"/>
<rect x="573.1" y="427.5" width="6.5" height="7.0" rx="2.5" fill="#c9979b"/>
<ellipse cx="571.1" cy="465.5" rx="3.1" ry="2.7" fill="#c9979b"/>
<ellipse cx="571.1" cy="475.6" rx="3.1" ry="2.7" fill="#c9979b"/>
<ellipse cx="571.1" cy="485.6" rx="3.1" ry="2.7" fill="#c9979b"/>
<ellipse cx="581.4" cy="465.5" rx="3.1" ry="2.7" fill="#c9979b"/>
<ellipse cx="581.4" cy="475.6" rx="3.1" ry="2.7" fill="#c9979b"/>
<ellipse cx="581.4" cy="485.6" rx="3.1" ry="2.7" fill="#c9979b"/>
<ellipse cx="591.8" cy="465.5" rx="3.1" ry="2.7" fill="#c9979b"/>
<ellipse cx="591.8" cy="475.6" rx="3.1" ry="2.7" fill="#c9979b"/>
<ellipse cx="591.8" cy="485.6" rx="3.1" ry="2.7" fill="#c9979b"/>
<ellipse cx="602.1" cy="465.5" rx="3.1" ry="2.7" fill="#c9979b"/>
<ellipse cx="602.1" cy="475.6" rx="3.1" ry="2.7" fill="#c9979b"/>
<ellipse cx="602.1" cy="485.6" rx="3.1" ry="2.7" fill="#c9979b"/>
<ellipse cx="612.4" cy="465.5" rx="3.1" ry="2.7" fill="#c9979b"/>
<ellipse cx="612.4" cy="475.6" rx="3.1" ry="2.7" fill="#c9979b"/>
<ellipse cx="612.4" cy="485.6" rx="3.1" ry="2.7" fill="#c9979b"/>
<ellipse cx="622.8" cy="465.5" rx="3.1" ry="2.7" fill="#c9979b"/>
<ellipse cx="622.8" cy="475.6" rx="3.1" ry="2.7" fill="#c9979b"/>
<ellipse cx="622.8" cy="485.6" rx="3.1" ry="2.7" fill="#c9979b"/>
<ellipse cx="633.1" cy="465.5" rx="3.1" ry="2.7" fill="#c9979b"/>
<ellipse cx="633.1" cy="475.6" rx="3.1" ry="2.7" fill="#c9979b"/>
<ellipse cx="633.1" cy="485.6" rx="3.1" ry="2.7" fill="#c9979b"/>
<ellipse cx="643.4" cy="465.5" rx="3.1" ry="2.7" fill="#c9979b"/>
<ellipse cx="643.4" cy="475.6" rx="3.1" ry="2.7" fill="#c9979b"/>
<ellipse cx="643.4" cy="485.6" rx="3.1" ry="2.7" fill="#c9979b"/>
<ellipse cx="653.7" cy="465.5" rx="3.1" ry="2.7" fill="#c9979b"/>
<ellipse cx="653.7" cy="475.6" rx="3.1" ry="2.7" fill="#c9979b"/>
<ellipse cx="653.7" cy="485.6" rx="3.1" ry="2.7" fill="#c9979b"/>
<ellipse cx="664.1" cy="465.5" rx="3.1" ry="2.7" fill="#c9979b"/>
<ellipse cx="664.1" cy="475.6" rx="3.1" ry="2.7" fill="#c9979b"/>
<ellipse cx="664.1" cy="485.6" rx="3.1" ry="2.7" fill="#c9979b"/>
<ellipse cx="674.4" cy="465.5" rx="3.1" ry="2.7" fill="#c9979b"/>
<ellipse cx="674.4" cy="475.6" rx="3.1" ry="2.7" fill="#c9979b"/>
<ellipse cx="674.4" cy="485.6" rx="3.1" ry="2.7" fill="#c9979b"/>
<ellipse cx="684.7" cy="465.5" rx="3.1" ry="2.7" fill="#c9979b"/>
<ellipse cx="684.7" cy="475.6" rx="3.1" ry="2.7" fill="#c9979b"/>
<ellipse cx="684.7" cy="485.6" rx="3.1" ry="2.7" fill="#c9979b"/>
<ellipse cx="695.1" cy="465.5" rx="3.1" ry="2.7" fill="#c9979b"/>
<ellipse cx="695.1" cy="475.6" rx="3.1" ry="2.7" fill="#c9979b"/>
<ellipse cx="695.1" cy="485.6" rx="3.1" ry="2.7" fill="#c9979b"/>
<ellipse cx="705.4" cy="465.5" rx="3.1" ry="2.7" fill="#c9979b"/>
<ellipse cx="705.4" cy="475.6" rx="3.1" ry="2.7" fill="#c9979b"/>
<ellipse cx="705.4" cy="485.6" rx="3.1" ry="2.7" fill="#c9979b"/>
<ellipse cx="715.7" cy="465.5" rx="3.1" ry="2.7" fill="#c9979b"/>
<ellipse cx="715.7" cy="475.6" rx="3.1" ry="2.7" fill="#c9979b"/>
<ellipse cx="715.7" cy="485.6" rx="3.1" ry="2.7" fill="#c9979b"/>
<ellipse cx="726.0" cy="465.5" rx="3.1" ry="2.7" fill="#c9979b"/>
<ellipse cx="726.0" cy="475.6" rx="3.1" ry="2.7" fill="#c9979b"/>
<ellipse cx="726.0" cy="485.6" rx="3.1" ry="2.7" fill="#c9979b"/>
<ellipse cx="571.1" cy="527.4" rx="3.1" ry="2.7" fill="#c9979b"/>
<ellipse cx="571.1" cy="537.4" rx="3.1" ry="2.7" fill="#c9979b"/>
<ellipse cx="571.1" cy="547.4" rx="3.1" ry="2.7" fill="#c9979b"/>
<ellipse cx="581.4" cy="527.4" rx="3.1" ry="2.7" fill="#c9979b"/>
<ellipse cx="581.4" cy="537.4" rx="3.1" ry="2.7" fill="#c9979b"/>
<ellipse cx="581.4" cy="547.4" rx="3.1" ry="2.7" fill="#c9979b"/>
<ellipse cx="591.8" cy="527.4" rx="3.1" ry="2.7" fill="#c9979b"/>
<ellipse cx="591.8" cy="537.4" rx="3.1" ry="2.7" fill="#c9979b"/>
<ellipse cx="591.8" cy="547.4" rx="3.1" ry="2.7" fill="#c9979b"/>
<ellipse cx="602.1" cy="527.4" rx="3.1" ry="2.7" fill="#c9979b"/>
<ellipse cx="602.1" cy="537.4" rx="3.1" ry="2.7" fill="#c9979b"/>
<ellipse cx="602.1" cy="547.4" rx="3.1" ry="2.7" fill="#c9979b"/>
<ellipse cx="612.4" cy="527.4" rx="3.1" ry="2.7" fill="#c9979b"/>
<ellipse cx="612.4" cy="537.4" rx="3.1" ry="2.7" fill="#c9979b"/>
<ellipse cx="612.4" cy="547.4" rx="3.1" ry="2.7" fill="#c9979b"/>
<ellipse cx="622.8" cy="527.4" rx="3.1" ry="2.7" fill="#c9979b"/>
<ellipse cx="622.8" cy="537.4" rx="3.1" ry="2.7" fill="#c9979b"/>
<ellipse cx="622.8" cy="547.4" rx="3.1" ry="2.7" fill="#c9979b"/>
<ellipse cx="633.1" cy="527.4" rx="3.1" ry="2.7" fill="#c9979b"/>
<ellipse cx="633.1" cy="537.4" rx="3.1" ry="2.7" fill="#c9979b"/>
<ellipse cx="633.1" cy="547.4" rx="3.1" ry="2.7" fill="#c9979b"/>
<ellipse cx="643.4" cy="527.4" rx="3.1" ry="2.7" fill="#c9979b"/>
<ellipse cx="643.4" cy="537.4" rx="3.1" ry="2.7" fill="#c9979b"/>
<ellipse cx="643.4" cy="547.4" rx="3.1" ry="2.7" fill="#c9979b"/>
<ellipse cx="653.7" cy="527.4" rx="3.1" ry="2.7" fill="#c9979b"/>
<ellipse cx="653.7" cy="537.4" rx="3.1" ry="2.7" fill="#c9979b"/>
<ellipse cx="653.7" cy="547.4" rx="3.1" ry="2.7" fill="#c9979b"/>
<ellipse cx="664.1" cy="527.4" rx="3.1" ry="2.7" fill="#c9979b"/>
<ellipse cx="664.1" cy="537.4" rx="3.1" ry="2.7" fill="#c9979b"/>
<ellipse cx="664.1" cy="547.4" rx="3.1" ry="2.7" fill="#c9979b"/>
<ellipse cx="674.4" cy="527.4" rx="3.1" ry="2.7" fill="#c9979b"/>
<ellipse cx="674.4" cy="537.4" rx="3.1" ry="2.7" fill="#c9979b"/>
<ellipse cx="674.4" cy="547.4" rx="3.1" ry="2.7" fill="#c9979b"/>
<ellipse cx="684.7" cy="527.4" rx="3.1" ry="2.7" fill="#c9979b"/>
<ellipse cx="684.7" cy="537.4" rx="3.1" ry="2.7" fill="#c9979b"/>
<ellipse cx="684.7" cy="547.4" rx="3.1" ry="2.7" fill="#c9979b"/>
<ellipse cx="695.1" cy="527.4" rx="3.1" ry="2.7" fill="#c9979b"/>
<ellipse cx="695.1" cy="537.4" rx="3.1" ry="2.7" fill="#c9979b"/>
<ellipse cx="695.1" cy="547.4" rx="3.1" ry="2.7" fill="#c9979b"/>
<ellipse cx="705.4" cy="527.4" rx="3.1" ry="2.7" fill="#c9979b"/>
<ellipse cx="705.4" cy="537.4" rx="3.1" ry="2.7" fill="#c9979b"/>
<ellipse cx="705.4" cy="547.4" rx="3.1" ry="2.7" fill="#c9979b"/>
<ellipse cx="715.7" cy="527.4" rx="3.1" ry="2.7" fill="#c9979b"/>
<ellipse cx="715.7" cy="537.4" rx="3.1" ry="2.7" fill="#c9979b"/>
<ellipse cx="715.7" cy="547.4" rx="3.1" ry="2.7" fill="#c9979b"/>
<ellipse cx="726.0" cy="527.4" rx="3.1" ry="2.7" fill="#c9979b"/>
<ellipse cx="726.0" cy="537.4" rx="3.1" ry="2.7" fill="#c9979b"/>
<ellipse cx="726.0" cy="547.4" rx="3.1" ry="2.7" fill="#c9979b"/>
<ellipse cx="571.1" cy="729.4" rx="3.1" ry="2.7" fill="#c9979b"/>
<ellipse cx="571.1" cy="739.4" rx="3.1" ry="2.7" fill="#c9979b"/>
<ellipse cx="571.1" cy="750.4" rx="3.1" ry="2.7" fill="#c9979b"/>
<ellipse cx="581.4" cy="729.4" rx="3.1" ry="2.7" fill="#c9979b"/>
<ellipse cx="581.4" cy="739.4" rx="3.1" ry="2.7" fill="#c9979b"/>
<ellipse cx="581.4" cy="750.4" rx="3.1" ry="2.7" fill="#c9979b"/>
<ellipse cx="591.8" cy="729.4" rx="3.1" ry="2.7" fill="#c9979b"/>
<ellipse cx="591.8" cy="739.4" rx="3.1" ry="2.7" fill="#c9979b"/>
<ellipse cx="591.8" cy="750.4" rx="3.1" ry="2.7" fill="#c9979b"/>
<ellipse cx="602.1" cy="729.4" rx="3.1" ry="2.7" fill="#c9979b"/>
<ellipse cx="602.1" cy="739.4" rx="3.1" ry="2.7" fill="#c9979b"/>
<ellipse cx="602.1" cy="750.4" rx="3.1" ry="2.7" fill="#c9979b"/>
<ellipse cx="612.4" cy="729.4" rx="3.1" ry="2.7" fill="#c9979b"/>
<ellipse cx="612.4" cy="739.4" rx="3.1" ry="2.7" fill="#c9979b"/>
<ellipse cx="612.4" cy="750.4" rx="3.1" ry="2.7" fill="#c9979b"/>
<ellipse cx="622.8" cy="729.4" rx="3.1" ry="2.7" fill="#c9979b"/>
<ellipse cx="622.8" cy="739.4" rx="3.1" ry="2.7" fill="#c9979b"/>
<ellipse cx="622.8" cy="750.4" rx="3.1" ry="2.7" fill="#c9979b"/>
<ellipse cx="633.1" cy="729.4" rx="3.1" ry="2.7" fill="#c9979b"/>
<ellipse cx="633.1" cy="739.4" rx="3.1" ry="2.7" fill="#c9979b"/>
<ellipse cx="633.1" cy="750.4" rx="3.1" ry="2.7" fill="#c9979b"/>
<ellipse cx="643.4" cy="729.4" rx="3.1" ry="2.7" fill="#c9979b"/>
<ellipse cx="643.4" cy="739.4" rx="3.1" ry="2.7" fill="#c9979b"/>
<ellipse cx="643.4" cy="750.4" rx="3.1" ry="2.7" fill="#c9979b"/>
<ellipse cx="653.7" cy="729.4" rx="3.1" ry="2.7" fill="#c9979b"/>
<ellipse cx="653.7" cy="739.4" rx="3.1" ry="2.7" fill="#c9979b"/>
<ellipse cx="653.7" cy="750.4" rx="3.1" ry="2.7" fill="#c9979b"/>
<ellipse cx="664.1" cy="729.4" rx="3.1" ry="2.7" fill="#c9979b"/>
<ellipse cx="664.1" cy="739.4" rx="3.1" ry="2.7" fill="#c9979b"/>
<ellipse cx="664.1" cy="750.4" rx="3.1" ry="2.7" fill="#c9979b"/>
<ellipse cx="674.4" cy="729.4" rx="3.1" ry="2.7" fill="#c9979b"/>
<ellipse cx="674.4" cy="739.4" rx="3.1" ry="2.7" fill="#c9979b"/>
<ellipse cx="674.4" cy="750.4" rx="3.1" ry="2.7" fill="#c9979b"/>
<ellipse cx="684.7" cy="729.4" rx="3.1" ry="2.7" fill="#c9979b"/>
<ellipse cx="684.7" cy="739.4" rx="3.1" ry="2.7" fill="#c9979b"/>
<ellipse cx="684.7" cy="750.4" rx="3.1" ry="2.7" fill="#c9979b"/>
<ellipse cx="695.1" cy="729.4" rx="3.1" ry="2.7" fill="#c9979b"/>
<ellipse cx="695.1" cy="739.4" rx="3.1" ry="2.7" fill="#c9979b"/>
<ellipse cx="695.1" cy="750.4" rx="3.1" ry="2.7" fill="#c9979b"/>
<ellipse cx="705.4" cy="729.4" rx="3.1" ry="2.7" fill="#c9979b"/>
<ellipse cx="705.4" cy="739.4" rx="3.1" ry="2.7" fill="#c9979b"/>
<ellipse cx="705.4" cy="750.4" rx="3.1" ry="2.7" fill="#c9979b"/>
<ellipse cx="715.7" cy="729.4" rx="3.1" ry="2.7" fill="#c9979b"/>
<ellipse cx="715.7" cy="739.4" rx="3.1" ry="2.7" fill="#c9979b"/>
<ellipse cx="715.7" cy="750.4" rx="3.1" ry="2.7" fill="#c9979b"/>
<ellipse cx="726.0" cy="729.4" rx="3.1" ry="2.7" fill="#c9979b"/>
<ellipse cx="726.0" cy="739.4" rx="3.1" ry="2.7" fill="#c9979b"/>
<ellipse cx="726.0" cy="750.4" rx="3.1" ry="2.7" fill="#c9979b"/>
<ellipse cx="571.1" cy="791.3" rx="3.1" ry="2.7" fill="#c9979b"/>
<ellipse cx="571.1" cy="801.3" rx="3.1" ry="2.7" fill="#c9979b"/>
<ellipse cx="571.1" cy="811.5" rx="3.1" ry="2.7" fill="#c9979b"/>
<ellipse cx="581.4" cy="791.3" rx="3.1" ry="2.7" fill="#c9979b"/>
<ellipse cx="581.4" cy="801.3" rx="3.1" ry="2.7" fill="#c9979b"/>
<ellipse cx="581.4" cy="811.5" rx="3.1" ry="2.7" fill="#c9979b"/>
<ellipse cx="591.8" cy="791.3" rx="3.1" ry="2.7" fill="#c9979b"/>
<ellipse cx="591.8" cy="801.3" rx="3.1" ry="2.7" fill="#c9979b"/>
<ellipse cx="591.8" cy="811.5" rx="3.1" ry="2.7" fill="#c9979b"/>
<ellipse cx="602.1" cy="791.3" rx="3.1" ry="2.7" fill="#c9979b"/>
<ellipse cx="602.1" cy="801.3" rx="3.1" ry="2.7" fill="#c9979b"/>
<ellipse cx="602.1" cy="811.5" rx="3.1" ry="2.7" fill="#c9979b"/>
<ellipse cx="612.4" cy="791.3" rx="3.1" ry="2.7" fill="#c9979b"/>
<ellipse cx="612.4" cy="801.3" rx="3.1" ry="2.7" fill="#c9979b"/>
<ellipse cx="612.4" cy="811.5" rx="3.1" ry="2.7" fill="#c9979b"/>
<ellipse cx="622.8" cy="791.3" rx="3.1" ry="2.7" fill="#c9979b"/>
<ellipse cx="622.8" cy="801.3" rx="3.1" ry="2.7" fill="#c9979b"/>
<ellipse cx="622.8" cy="811.5" rx="3.1" ry="2.7" fill="#c9979b"/>
<ellipse cx="633.1" cy="791.3" rx="3.1" ry="2.7" fill="#c9979b"/>
<ellipse cx="633.1" cy="801.3" rx="3.1" ry="2.7" fill="#c9979b"/>
<ellipse cx="633.1" cy="811.5" rx="3.1" ry="2.7" fill="#c9979b"/>
<ellipse cx="643.4" cy="791.3" rx="3.1" ry="2.7" fill="#c9979b"/>
<ellipse cx="643.4" cy="801.3" rx="3.1" ry="2.7" fill="#c9979b"/>
<ellipse cx="643.4" cy="811.5" rx="3.1" ry="2.7" fill="#c9979b"/>
<ellipse cx="653.7" cy="791.3" rx="3.1" ry="2.7" fill="#c9979b"/>
<ellipse cx="653.7" cy="801.3" rx="3.1" ry="2.7" fill="#c9979b"/>
<ellipse cx="653.7" cy="811.5" rx="3.1" ry="2.7" fill="#c9979b"/>
<ellipse cx="664.1" cy="791.3" rx="3.1" ry="2.7" fill="#c9979b"/>
<ellipse cx="664.1" cy="801.3" rx="3.1" ry="2.7" fill="#c9979b"/>
<ellipse cx="664.1" cy="811.5" rx="3.1" ry="2.7" fill="#c9979b"/>
<ellipse cx="674.4" cy="791.3" rx="3.1" ry="2.7" fill="#c9979b"/>
<ellipse cx="674.4" cy="801.3" rx="3.1" ry="2.7" fill="#c9979b"/>
<ellipse cx="674.4" cy="811.5" rx="3.1" ry="2.7" fill="#c9979b"/>
<ellipse cx="684.7" cy="791.3" rx="3.1" ry="2.7" fill="#c9979b"/>
<ellipse cx="684.7" cy="801.3" rx="3.1" ry="2.7" fill="#c9979b"/>
<ellipse cx="684.7" cy="811.5" rx="3.1" ry="2.7" fill="#c9979b"/>
<ellipse cx="695.1" cy="791.3" rx="3.1" ry="2.7" fill="#c9979b"/>
<ellipse cx="695.1" cy="801.3" rx="3.1" ry="2.7" fill="#c9979b"/>
<ellipse cx="695.1" cy="811.5" rx="3.1" ry="2.7" fill="#c9979b"/>
<ellipse cx="705.4" cy="791.3" rx="3.1" ry="2.7" fill="#c9979b"/>
<ellipse cx="705.4" cy="801.3" rx="3.1" ry="2.7" fill="#c9979b"/>
<ellipse cx="705.4" cy="811.5" rx="3.1" ry="2.7" fill="#c9979b"/>
<ellipse cx="715.7" cy="791.3" rx="3.1" ry="2.7" fill="#c9979b"/>
<ellipse cx="715.7" cy="801.3" rx="3.1" ry="2.7" fill="#c9979b"/>
<ellipse cx="715.7" cy="811.5" rx="3.1" ry="2.7" fill="#c9979b"/>
<ellipse cx="726.0" cy="791.3" rx="3.1" ry="2.7" fill="#c9979b"/>
<ellipse cx="726.0" cy="801.3" rx="3.1" ry="2.7" fill="#c9979b"/>
<ellipse cx="726.0" cy="811.5" rx="3.1" ry="2.7" fill="#c9979b"/>
<rect x="766.0" y="412.0" width="13.0" height="21.0" fill="#c9979b"/>
<rect x="820.0" y="412.0" width="13.0" height="21.0" fill="#c9979b"/>
<rect x="849.0" y="410.2" width="7.0" height="7.0" rx="2" fill="#c9979b"/>
<rect x="849.0" y="422.1" width="7.0" height="7.0" rx="2" fill="#c9979b"/>
<rect x="861.9" y="410.2" width="7.0" height="7.0" rx="2" fill="#c9979b"/>
<rect x="861.9" y="422.1" width="7.0" height="7.0" rx="2" fill="#c9979b"/>
<rect x="879.0" y="402.0" width="15.0" height="18.0" fill="#c9979b"/>
<rect x="901.0" y="402.0" width="15.0" height="18.0" fill="#c9979b"/>
<rect x="879.0" y="431.0" width="15.0" height="18.0" fill="#c9979b"/>
<rect x="901.0" y="431.0" width="15.0" height="18.0" fill="#c9979b"/>
<rect x="811.8" y="449.8" width="7.0" height="7.0" rx="2.5" fill="#c9979b"/>
<rect x="823.7" y="449.8" width="7.0" height="7.0" rx="2.5" fill="#c9979b"/>
<circle cx="826.8" cy="467.6" r="5.0" fill="#c9979b"/>
<rect x="893.1" y="458.9" width="6.5" height="7.0" rx="2" fill="#c9979b"/>
<rect x="893.1" y="471.6" width="6.5" height="7.0" rx="2" fill="#c9979b"/>
<rect x="905.0" y="458.9" width="6.5" height="7.0" rx="2" fill="#c9979b"/>
<rect x="905.0" y="471.6" width="6.5" height="7.0" rx="2" fill="#c9979b"/>
<rect x="919.0" y="458.9" width="6.5" height="7.0" rx="2" fill="#c9979b"/>
<rect x="919.0" y="471.6" width="6.5" height="7.0" rx="2" fill="#c9979b"/>
<rect x="1108.0" y="460.7" width="7.0" height="7.0" rx="2.5" fill="#c9979b"/>
<rect x="1108.0" y="472.5" width="7.0" height="7.0" rx="2.5" fill="#c9979b"/>
<rect x="1121.9" y="460.7" width="7.0" height="7.0" rx="2.5" fill="#c9979b"/>
<rect x="1121.9" y="472.5" width="7.0" height="7.0" rx="2.5" fill="#c9979b"/>
<rect x="1135.7" y="460.7" width="7.0" height="7.0" rx="2.5" fill="#c9979b"/>
<rect x="1135.7" y="472.5" width="7.0" height="7.0" rx="2.5" fill="#c9979b"/>
<rect x="1147.3" y="460.7" width="7.0" height="7.0" rx="2.5" fill="#c9979b"/>
<rect x="1147.3" y="472.5" width="7.0" height="7.0" rx="2.5" fill="#c9979b"/>
<rect x="1107.0" y="490.0" width="13.0" height="12.0" fill="#c9979b"/>
<rect x="1139.0" y="490.0" width="13.0" height="12.0" fill="#c9979b"/>
<rect x="1089.9" y="531.9" width="7.0" height="7.0" rx="2.5" fill="#c9979b"/>
<rect x="1089.9" y="543.5" width="7.0" height="7.0" rx="2.5" fill="#c9979b"/>
<rect x="1102.9" y="531.9" width="7.0" height="7.0" rx="2.5" fill="#c9979b"/>
<rect x="1102.9" y="543.5" width="7.0" height="7.0" rx="2.5" fill="#c9979b"/>
<rect x="1115.8" y="531.9" width="7.0" height="7.0" rx="2.5" fill="#c9979b"/>
<rect x="1115.8" y="543.5" width="7.0" height="7.0" rx="2.5" fill="#c9979b"/>
<rect x="1129.8" y="531.9" width="7.0" height="7.0" rx="2.5" fill="#c9979b"/>
<rect x="1129.8" y="543.5" width="7.0" height="7.0" rx="2.5" fill="#c9979b"/>
<rect x="1145.8" y="531.4" width="8.0" height="8.0" rx="3" fill="#c9979b"/>
<rect x="1145.8" y="543.8" width="8.0" height="7.5" rx="3" fill="#c9979b"/>
<rect x="1163.7" y="532.0" width="6.0" height="6.5" fill="#c9979b"/>
<rect x="1163.7" y="543.5" width="6.0" height="6.5" fill="#c9979b"/>
<rect x="1179.9" y="532.5" width="7.0" height="7.0" rx="3" fill="#c9979b"/>
<rect x="1179.9" y="544.0" width="7.0" height="7.0" rx="3" fill="#c9979b"/>
<circle cx="1123.9" cy="566.6" r="5.0" fill="#c9979b"/>
<rect x="1146.5" y="567.8" width="6.5" height="7.0" rx="2" fill="#c9979b"/>
<rect x="1146.5" y="579.6" width="6.5" height="7.0" rx="2" fill="#c9979b"/>
<rect x="1161.2" y="567.8" width="6.5" height="7.0" rx="2" fill="#c9979b"/>
<rect x="1161.2" y="579.6" width="6.5" height="7.0" rx="2" fill="#c9979b"/>
<circle cx="1096.0" cy="585.7" r="5.0" fill="#c9979b"/>
<circle cx="1123.9" cy="590.6" r="5.0" fill="#c9979b"/>
<circle cx="1088.0" cy="605.5" r="4.7" fill="#c9979b"/>
<rect x="1063.9" y="615.5" width="7.0" height="7.0" rx="2" fill="#c9979b"/>
<rect x="1063.9" y="626.7" width="7.0" height="7.0" rx="2" fill="#c9979b"/>
<rect x="1077.0" y="615.5" width="7.0" height="7.0" rx="2" fill="#c9979b"/>
<rect x="1077.0" y="626.7" width="7.0" height="7.0" rx="2" fill="#c9979b"/>
<rect x="1090.0" y="615.5" width="7.0" height="7.0" rx="2" fill="#c9979b"/>
<rect x="1090.0" y="626.7" width="7.0" height="7.0" rx="2" fill="#c9979b"/>
<rect x="1103.9" y="615.5" width="7.0" height="7.0" rx="2" fill="#c9979b"/>
<rect x="1103.9" y="626.7" width="7.0" height="7.0" rx="2" fill="#c9979b"/>
<rect x="1154.8" y="613.2" width="6.5" height="6.5" rx="2" fill="#c9979b"/>
<rect x="1154.8" y="624.8" width="6.5" height="6.5" rx="2" fill="#c9979b"/>
<rect x="1168.8" y="613.2" width="6.5" height="6.5" rx="2" fill="#c9979b"/>
<rect x="1168.8" y="624.8" width="6.5" height="6.5" rx="2" fill="#c9979b"/>
<rect x="1183.0" y="613.2" width="6.5" height="6.5" rx="2" fill="#c9979b"/>
<rect x="1183.0" y="624.8" width="6.5" height="6.5" rx="2" fill="#c9979b"/>
<rect x="1197.2" y="613.2" width="6.5" height="6.5" rx="2" fill="#c9979b"/>
<rect x="1197.2" y="624.8" width="6.5" height="6.5" rx="2" fill="#c9979b"/>
<circle cx="1066.0" cy="657.5" r="5.0" fill="#c9979b"/>
<rect x="1077.0" y="650.5" width="7.0" height="6.5" rx="2.5" fill="#c9979b"/>
<rect x="1077.0" y="662.1" width="7.0" height="6.5" rx="2.5" fill="#c9979b"/>
<rect x="1090.0" y="650.5" width="7.0" height="6.5" rx="2.5" fill="#c9979b"/>
<rect x="1090.0" y="662.1" width="7.0" height="6.5" rx="2.5" fill="#c9979b"/>
<rect x="1102.9" y="650.5" width="7.0" height="6.5" rx="2.5" fill="#c9979b"/>
<rect x="1102.9" y="662.1" width="7.0" height="6.5" rx="2.5" fill="#c9979b"/>
<rect x="1127.7" y="649.0" width="6.5" height="6.5" rx="1.5" fill="#c9979b"/>
<rect x="1127.7" y="660.8" width="6.5" height="6.5" rx="1.5" fill="#c9979b"/>
<rect x="1141.8" y="649.0" width="6.5" height="6.5" rx="1.5" fill="#c9979b"/>
<rect x="1141.8" y="660.8" width="6.5" height="6.5" rx="1.5" fill="#c9979b"/>
<rect x="1182.8" y="647.9" width="7.0" height="7.0" rx="2.5" fill="#c9979b"/>
<rect x="1182.8" y="659.4" width="7.0" height="7.0" rx="2.5" fill="#c9979b"/>
<rect x="1197.0" y="647.9" width="7.0" height="7.0" rx="2.5" fill="#c9979b"/>
<rect x="1197.0" y="659.4" width="7.0" height="7.0" rx="2.5" fill="#c9979b"/>
<circle cx="1068.9" cy="682.5" r="5.0" fill="#c9979b"/>
<circle cx="1066.0" cy="697.5" r="5.0" fill="#c9979b"/>
<circle cx="1096.0" cy="686.5" r="5.0" fill="#c9979b"/>
<circle cx="1121.9" cy="688.4" r="5.0" fill="#c9979b"/>
<rect x="1081.3" y="702.0" width="6.5" height="6.5" rx="2" fill="#c9979b"/>
<rect x="1081.3" y="713.8" width="6.5" height="6.5" rx="2" fill="#c9979b"/>
<rect x="1095.0" y="702.0" width="6.5" height="6.5" rx="2" fill="#c9979b"/>
<rect x="1095.0" y="713.8" width="6.5" height="6.5" rx="2" fill="#c9979b"/>
<rect x="1109.7" y="702.0" width="6.5" height="6.5" rx="2" fill="#c9979b"/>
<rect x="1109.7" y="713.8" width="6.5" height="6.5" rx="2" fill="#c9979b"/>
<rect x="1123.7" y="702.0" width="6.5" height="6.5" rx="2" fill="#c9979b"/>
<rect x="1123.7" y="713.8" width="6.5" height="6.5" rx="2" fill="#c9979b"/>
<rect x="1136.7" y="702.0" width="6.5" height="6.5" rx="2" fill="#c9979b"/>
<rect x="1136.7" y="713.8" width="6.5" height="6.5" rx="2" fill="#c9979b"/>
<rect x="1150.5" y="702.0" width="6.5" height="6.5" rx="2" fill="#c9979b"/>
<rect x="1150.5" y="713.8" width="6.5" height="6.5" rx="2" fill="#c9979b"/>
<rect x="1163.5" y="702.0" width="6.5" height="6.5" rx="2" fill="#c9979b"/>
<rect x="1163.5" y="713.8" width="6.5" height="6.5" rx="2" fill="#c9979b"/>
<rect x="1193.8" y="680.0" width="6.5" height="7.0" rx="2" fill="#c9979b"/>
<rect x="1193.8" y="694.0" width="6.5" height="7.0" rx="2" fill="#c9979b"/>
<rect x="1193.8" y="708.0" width="6.5" height="7.0" rx="2" fill="#c9979b"/>
<rect x="1193.8" y="720.8" width="6.5" height="7.0" rx="2" fill="#c9979b"/>
<rect x="1205.0" y="680.0" width="6.5" height="7.0" rx="2" fill="#c9979b"/>
<rect x="1205.0" y="694.0" width="6.5" height="7.0" rx="2" fill="#c9979b"/>
<rect x="1205.0" y="708.0" width="6.5" height="7.0" rx="2" fill="#c9979b"/>
<rect x="1205.0" y="720.8" width="6.5" height="7.0" rx="2" fill="#c9979b"/>
<rect x="1080.8" y="742.4" width="7.0" height="6.0" rx="2" fill="#c9979b"/>
<rect x="1080.8" y="754.1" width="7.0" height="6.0" rx="2" fill="#c9979b"/>
<rect x="1107.9" y="742.4" width="7.0" height="6.0" rx="2" fill="#c9979b"/>
<rect x="1107.9" y="754.1" width="7.0" height="6.0" rx="2" fill="#c9979b"/>
<circle cx="1094.7" cy="775.6" r="5.0" fill="#c9979b"/>
<circle cx="1117.8" cy="775.6" r="5.0" fill="#c9979b"/>
<rect x="1081.0" y="791.4" width="6.5" height="6.0" rx="2" fill="#c9979b"/>
<rect x="1081.0" y="802.7" width="6.5" height="6.0" rx="2" fill="#c9979b"/>
<rect x="1094.2" y="791.4" width="6.5" height="6.0" rx="2" fill="#c9979b"/>
<rect x="1094.2" y="802.7" width="6.5" height="6.0" rx="2" fill="#c9979b"/>
<rect x="1106.8" y="791.4" width="6.5" height="6.0" rx="2" fill="#c9979b"/>
<rect x="1106.8" y="802.7" width="6.5" height="6.0" rx="2" fill="#c9979b"/>
<rect x="1119.8" y="791.4" width="6.5" height="6.0" rx="2" fill="#c9979b"/>
<rect x="1119.8" y="802.7" width="6.5" height="6.0" rx="2" fill="#c9979b"/>
<rect x="1132.5" y="791.4" width="6.5" height="6.0" rx="2" fill="#c9979b"/>
<rect x="1132.5" y="802.7" width="6.5" height="6.0" rx="2" fill="#c9979b"/>
<rect x="1145.5" y="791.4" width="6.5" height="6.0" rx="2" fill="#c9979b"/>
<rect x="1145.5" y="802.7" width="6.5" height="6.0" rx="2" fill="#c9979b"/>
<rect x="1158.5" y="791.4" width="6.5" height="6.0" rx="2" fill="#c9979b"/>
<rect x="1158.5" y="802.7" width="6.5" height="6.0" rx="2" fill="#c9979b"/>
<path d="M843 537h4v3h-4z M851 537h4v3h-4z M859 537h4v3h-4z M868 537h4v3h-4z M876 537h4v3h-4z M884 537h4v3h-4z M893 537h4v3h-4z M901 537h4v3h-4z M910 537h4v3h-4z M918 537h4v3h-4z M926 537h4v3h-4z M935 537h4v3h-4z M951 537h4v3h-4z M960 537h4v3h-4z M968 537h4v3h-4z M977 537h4v3h-4z M985 537h4v3h-4z M993 537h4v3h-4z M1002 537h4v3h-4z M1010 537h4v3h-4z M1018 537h4v3h-4z M1027 537h4v3h-4z M1035 537h4v3h-4z M1044 537h4v3h-4z M843 545h4v3h-4z M851 545h4v3h-4z M859 545h4v3h-4z M868 545h4v3h-4z M876 545h4v3h-4z M884 545h4v3h-4z M893 545h4v3h-4z M901 545h4v3h-4z M910 545h4v3h-4z M918 545h4v3h-4z M926 545h4v3h-4z M935 545h4v3h-4z M951 545h4v3h-4z M960 545h4v3h-4z M968 545h4v3h-4z M977 545h4v3h-4z M985 545h4v3h-4z M993 545h4v3h-4z M1002 545h4v3h-4z M1010 545h4v3h-4z M1018 545h4v3h-4z M1027 545h4v3h-4z M1035 545h4v3h-4z M1044 545h4v3h-4z M843 553h4v3h-4z M851 553h4v3h-4z M868 553h4v3h-4z M876 553h4v3h-4z M884 553h4v3h-4z M893 553h4v3h-4z M901 553h4v3h-4z M910 553h4v3h-4z M926 553h4v3h-4z M935 553h4v3h-4z M951 553h4v3h-4z M960 553h4v3h-4z M977 553h4v3h-4z M985 553h4v3h-4z M993 553h4v3h-4z M1002 553h4v3h-4z M1010 553h4v3h-4z M1018 553h4v3h-4z M1035 553h4v3h-4z M1044 553h4v3h-4z M843 562h4v3h-4z M851 562h4v3h-4z M859 562h4v3h-4z M876 562h4v3h-4z M884 562h4v3h-4z M893 562h4v3h-4z M901 562h4v3h-4z M910 562h4v3h-4z M926 562h4v3h-4z M935 562h4v3h-4z M951 562h4v3h-4z M960 562h4v3h-4z M977 562h4v3h-4z M985 562h4v3h-4z M993 562h4v3h-4z M1002 562h4v3h-4z M1010 562h4v3h-4z M1027 562h4v3h-4z M1035 562h4v3h-4z M1044 562h4v3h-4z M843 570h4v3h-4z M851 570h4v3h-4z M859 570h4v3h-4z M868 570h4v3h-4z M884 570h4v3h-4z M893 570h4v3h-4z M901 570h4v3h-4z M910 570h4v3h-4z M926 570h4v3h-4z M935 570h4v3h-4z M951 570h4v3h-4z M960 570h4v3h-4z M977 570h4v3h-4z M985 570h4v3h-4z M993 570h4v3h-4z M1002 570h4v3h-4z M1018 570h4v3h-4z M1027 570h4v3h-4z M1035 570h4v3h-4z M1044 570h4v3h-4z M843 578h4v3h-4z M851 578h4v3h-4z M859 578h4v3h-4z M868 578h4v3h-4z M876 578h4v3h-4z M893 578h4v3h-4z M901 578h4v3h-4z M910 578h4v3h-4z M926 578h4v3h-4z M935 578h4v3h-4z M951 578h4v3h-4z M960 578h4v3h-4z M977 578h4v3h-4z M985 578h4v3h-4z M993 578h4v3h-4z M1010 578h4v3h-4z M1018 578h4v3h-4z M1027 578h4v3h-4z M1035 578h4v3h-4z M1044 578h4v3h-4z M843 587h4v3h-4z M851 587h4v3h-4z M859 587h4v3h-4z M868 587h4v3h-4z M876 587h4v3h-4z M901 587h4v3h-4z M910 587h4v3h-4z M926 587h4v3h-4z M935 587h4v3h-4z M951 587h4v3h-4z M960 587h4v3h-4z M977 587h4v3h-4z M985 587h4v3h-4z M1010 587h4v3h-4z M1018 587h4v3h-4z M1027 587h4v3h-4z M1035 587h4v3h-4z M1044 587h4v3h-4z M843 595h4v3h-4z M851 595h4v3h-4z M859 595h4v3h-4z M868 595h4v3h-4z M876 595h4v3h-4z M884 595h4v3h-4z M893 595h4v3h-4z M910 595h4v3h-4z M926 595h4v3h-4z M935 595h4v3h-4z M951 595h4v3h-4z M960 595h4v3h-4z M977 595h4v3h-4z M993 595h4v3h-4z M1002 595h4v3h-4z M1010 595h4v3h-4z M1018 595h4v3h-4z M1027 595h4v3h-4z M1035 595h4v3h-4z M1044 595h4v3h-4z M843 604h4v3h-4z M851 604h4v3h-4z M859 604h4v3h-4z M868 604h4v3h-4z M876 604h4v3h-4z M884 604h4v3h-4z M893 604h4v3h-4z M901 604h4v3h-4z M918 604h4v3h-4z M926 604h4v3h-4z M935 604h4v3h-4z M943 604h4v3h-4z M951 604h4v3h-4z M960 604h4v3h-4z M968 604h4v3h-4z M985 604h4v3h-4z M993 604h4v3h-4z M1002 604h4v3h-4z M1010 604h4v3h-4z M1018 604h4v3h-4z M1027 604h4v3h-4z M1035 604h4v3h-4z M1044 604h4v3h-4z M843 612h4v3h-4z M851 612h4v3h-4z M910 612h4v3h-4z M918 612h4v3h-4z M926 612h4v3h-4z M935 612h4v3h-4z M943 612h4v3h-4z M951 612h4v3h-4z M960 612h4v3h-4z M968 612h4v3h-4z M977 612h4v3h-4z M1035 612h4v3h-4z M1044 612h4v3h-4z M843 620h4v3h-4z M851 620h4v3h-4z M859 620h4v3h-4z M868 620h4v3h-4z M876 620h4v3h-4z M884 620h4v3h-4z M893 620h4v3h-4z M901 620h4v3h-4z M910 620h4v3h-4z M918 620h4v3h-4z M926 620h4v3h-4z M935 620h4v3h-4z M943 620h4v3h-4z M951 620h4v3h-4z M960 620h4v3h-4z M968 620h4v3h-4z M977 620h4v3h-4z M985 620h4v3h-4z M993 620h4v3h-4z M1002 620h4v3h-4z M1010 620h4v3h-4z M1018 620h4v3h-4z M1027 620h4v3h-4z M1035 620h4v3h-4z M1044 620h4v3h-4z M843 629h4v3h-4z M851 629h4v3h-4z M859 629h4v3h-4z M868 629h4v3h-4z M876 629h4v3h-4z M884 629h4v3h-4z M893 629h4v3h-4z M901 629h4v3h-4z M910 629h4v3h-4z M918 629h4v3h-4z M926 629h4v3h-4z M935 629h4v3h-4z M943 629h4v3h-4z M951 629h4v3h-4z M960 629h4v3h-4z M968 629h4v3h-4z M977 629h4v3h-4z M985 629h4v3h-4z M993 629h4v3h-4z M1002 629h4v3h-4z M1010 629h4v3h-4z M1018 629h4v3h-4z M1027 629h4v3h-4z M1035 629h4v3h-4z M1044 629h4v3h-4z M910 637h4v3h-4z M918 637h4v3h-4z M926 637h4v3h-4z M935 637h4v3h-4z M943 637h4v3h-4z M951 637h4v3h-4z M960 637h4v3h-4z M968 637h4v3h-4z M977 637h4v3h-4z M843 645h4v3h-4z M851 645h4v3h-4z M859 645h4v3h-4z M868 645h4v3h-4z M876 645h4v3h-4z M884 645h4v3h-4z M893 645h4v3h-4z M901 645h4v3h-4z M910 645h4v3h-4z M918 645h4v3h-4z M926 645h4v3h-4z M935 645h4v3h-4z M943 645h4v3h-4z M951 645h4v3h-4z M960 645h4v3h-4z M968 645h4v3h-4z M977 645h4v3h-4z M985 645h4v3h-4z M993 645h4v3h-4z M1002 645h4v3h-4z M1010 645h4v3h-4z M1018 645h4v3h-4z M1027 645h4v3h-4z M1035 645h4v3h-4z M1044 645h4v3h-4z M843 654h4v3h-4z M851 654h4v3h-4z M859 654h4v3h-4z M868 654h4v3h-4z M876 654h4v3h-4z M884 654h4v3h-4z M893 654h4v3h-4z M901 654h4v3h-4z M910 654h4v3h-4z M918 654h4v3h-4z M926 654h4v3h-4z M935 654h4v3h-4z M943 654h4v3h-4z M951 654h4v3h-4z M960 654h4v3h-4z M968 654h4v3h-4z M977 654h4v3h-4z M985 654h4v3h-4z M993 654h4v3h-4z M1002 654h4v3h-4z M1010 654h4v3h-4z M1018 654h4v3h-4z M1027 654h4v3h-4z M1035 654h4v3h-4z M1044 654h4v3h-4z M843 662h4v3h-4z M851 662h4v3h-4z M910 662h4v3h-4z M918 662h4v3h-4z M926 662h4v3h-4z M935 662h4v3h-4z M943 662h4v3h-4z M951 662h4v3h-4z M960 662h4v3h-4z M968 662h4v3h-4z M977 662h4v3h-4z M1035 662h4v3h-4z M1044 662h4v3h-4z M843 671h4v3h-4z M851 671h4v3h-4z M859 671h4v3h-4z M868 671h4v3h-4z M876 671h4v3h-4z M884 671h4v3h-4z M893 671h4v3h-4z M901 671h4v3h-4z M918 671h4v3h-4z M926 671h4v3h-4z M935 671h4v3h-4z M943 671h4v3h-4z M951 671h4v3h-4z M960 671h4v3h-4z M968 671h4v3h-4z M985 671h4v3h-4z M993 671h4v3h-4z M1002 671h4v3h-4z M1010 671h4v3h-4z M1018 671h4v3h-4z M1027 671h4v3h-4z M1035 671h4v3h-4z M1044 671h4v3h-4z M843 679h4v3h-4z M851 679h4v3h-4z M859 679h4v3h-4z M868 679h4v3h-4z M876 679h4v3h-4z M884 679h4v3h-4z M893 679h4v3h-4z M910 679h4v3h-4z M926 679h4v3h-4z M935 679h4v3h-4z M951 679h4v3h-4z M960 679h4v3h-4z M977 679h4v3h-4z M993 679h4v3h-4z M1002 679h4v3h-4z M1010 679h4v3h-4z M1018 679h4v3h-4z M1027 679h4v3h-4z M1035 679h4v3h-4z M1044 679h4v3h-4z M843 687h4v3h-4z M851 687h4v3h-4z M859 687h4v3h-4z M868 687h4v3h-4z M876 687h4v3h-4z M901 687h4v3h-4z M910 687h4v3h-4z M926 687h4v3h-4z M935 687h4v3h-4z M951 687h4v3h-4z M960 687h4v3h-4z M977 687h4v3h-4z M985 687h4v3h-4z M1010 687h4v3h-4z M1018 687h4v3h-4z M1027 687h4v3h-4z M1035 687h4v3h-4z M1044 687h4v3h-4z M843 696h4v3h-4z M851 696h4v3h-4z M859 696h4v3h-4z M868 696h4v3h-4z M876 696h4v3h-4z M893 696h4v3h-4z M901 696h4v3h-4z M910 696h4v3h-4z M926 696h4v3h-4z M935 696h4v3h-4z M951 696h4v3h-4z M960 696h4v3h-4z M977 696h4v3h-4z M985 696h4v3h-4z M993 696h4v3h-4z M1010 696h4v3h-4z M1018 696h4v3h-4z M1027 696h4v3h-4z M1035 696h4v3h-4z M1044 696h4v3h-4z M843 704h4v3h-4z M851 704h4v3h-4z M859 704h4v3h-4z M868 704h4v3h-4z M884 704h4v3h-4z M893 704h4v3h-4z M901 704h4v3h-4z M910 704h4v3h-4z M926 704h4v3h-4z M935 704h4v3h-4z M951 704h4v3h-4z M960 704h4v3h-4z M977 704h4v3h-4z M985 704h4v3h-4z M993 704h4v3h-4z M1002 704h4v3h-4z M1018 704h4v3h-4z M1027 704h4v3h-4z M1035 704h4v3h-4z M1044 704h4v3h-4z M843 712h4v3h-4z M851 712h4v3h-4z M859 712h4v3h-4z M876 712h4v3h-4z M884 712h4v3h-4z M893 712h4v3h-4z M901 712h4v3h-4z M910 712h4v3h-4z M926 712h4v3h-4z M935 712h4v3h-4z M951 712h4v3h-4z M960 712h4v3h-4z M977 712h4v3h-4z M985 712h4v3h-4z M993 712h4v3h-4z M1002 712h4v3h-4z M1010 712h4v3h-4z M1027 712h4v3h-4z M1035 712h4v3h-4z M1044 712h4v3h-4z M843 721h4v3h-4z M851 721h4v3h-4z M868 721h4v3h-4z M876 721h4v3h-4z M884 721h4v3h-4z M893 721h4v3h-4z M901 721h4v3h-4z M910 721h4v3h-4z M926 721h4v3h-4z M935 721h4v3h-4z M951 721h4v3h-4z M960 721h4v3h-4z M977 721h4v3h-4z M985 721h4v3h-4z M993 721h4v3h-4z M1002 721h4v3h-4z M1010 721h4v3h-4z M1018 721h4v3h-4z M1035 721h4v3h-4z M1044 721h4v3h-4z M843 729h4v3h-4z M851 729h4v3h-4z M859 729h4v3h-4z M868 729h4v3h-4z M876 729h4v3h-4z M884 729h4v3h-4z M893 729h4v3h-4z M901 729h4v3h-4z M910 729h4v3h-4z M918 729h4v3h-4z M926 729h4v3h-4z M935 729h4v3h-4z M951 729h4v3h-4z M960 729h4v3h-4z M968 729h4v3h-4z M977 729h4v3h-4z M985 729h4v3h-4z M993 729h4v3h-4z M1002 729h4v3h-4z M1010 729h4v3h-4z M1018 729h4v3h-4z M1027 729h4v3h-4z M1035 729h4v3h-4z M1044 729h4v3h-4z M843 738h4v3h-4z M851 738h4v3h-4z M859 738h4v3h-4z M868 738h4v3h-4z M876 738h4v3h-4z M884 738h4v3h-4z M893 738h4v3h-4z M901 738h4v3h-4z M910 738h4v3h-4z M918 738h4v3h-4z M926 738h4v3h-4z M935 738h4v3h-4z M951 738h4v3h-4z M960 738h4v3h-4z M968 738h4v3h-4z M977 738h4v3h-4z M985 738h4v3h-4z M993 738h4v3h-4z M1002 738h4v3h-4z M1010 738h4v3h-4z M1018 738h4v3h-4z M1027 738h4v3h-4z M1035 738h4v3h-4z M1044 738h4v3h-4z" fill="#d6a0a6" shape-rendering="crispEdges"/>
<rect x="573.0" y="579.9" width="6.0" height="6.3" rx="2" fill="#c9979b"/>
<rect x="573.0" y="591.5" width="6.0" height="6.3" rx="2" fill="#c9979b"/>
<rect x="594.8" y="579.9" width="6.0" height="6.3" rx="2" fill="#c9979b"/>
<rect x="594.8" y="591.5" width="6.0" height="6.3" rx="2" fill="#c9979b"/>
<rect x="608.8" y="579.9" width="6.0" height="6.3" rx="2" fill="#c9979b"/>
<rect x="608.8" y="591.5" width="6.0" height="6.3" rx="2" fill="#c9979b"/>
<rect x="622.3" y="579.9" width="6.0" height="6.3" rx="2" fill="#c9979b"/>
<rect x="622.3" y="591.5" width="6.0" height="6.3" rx="2" fill="#c9979b"/>
<rect x="636.9" y="579.9" width="6.0" height="6.3" rx="2" fill="#c9979b"/>
<rect x="636.9" y="591.5" width="6.0" height="6.3" rx="2" fill="#c9979b"/>
<rect x="651.8" y="579.9" width="6.0" height="6.3" rx="2" fill="#c9979b"/>
<rect x="651.8" y="591.5" width="6.0" height="6.3" rx="2" fill="#c9979b"/>
<rect x="686.7" y="579.9" width="6.0" height="6.3" rx="2" fill="#c9979b"/>
<rect x="686.7" y="591.5" width="6.0" height="6.3" rx="2" fill="#c9979b"/>
<rect x="701.3" y="579.9" width="6.0" height="6.3" rx="2" fill="#c9979b"/>
<rect x="701.3" y="591.5" width="6.0" height="6.3" rx="2" fill="#c9979b"/>
<rect x="718.0" y="579.9" width="6.0" height="6.3" rx="2" fill="#c9979b"/>
<rect x="718.0" y="591.5" width="6.0" height="6.3" rx="2" fill="#c9979b"/>
<rect x="648.8" y="613.0" width="6.0" height="6.5" rx="2.5" fill="#c9979b"/>
<rect x="660.4" y="613.0" width="6.0" height="6.5" rx="2.5" fill="#c9979b"/>
<rect x="786.0" y="624.0" width="6.5" height="6.0" rx="1.5" fill="#c9979b"/>
<rect x="786.0" y="635.3" width="6.5" height="6.0" rx="2" fill="#c9979b"/>
<rect x="578.8" y="679.7" width="7.0" height="7.0" rx="2.5" fill="#c9979b"/>
<rect x="578.8" y="691.7" width="7.0" height="7.0" rx="2.5" fill="#c9979b"/>
<rect x="594.3" y="679.7" width="7.0" height="7.0" rx="2.5" fill="#c9979b"/>
<rect x="594.3" y="691.7" width="7.0" height="7.0" rx="2.5" fill="#c9979b"/>
<rect x="609.6" y="679.7" width="7.0" height="7.0" rx="2.5" fill="#c9979b"/>
<rect x="609.6" y="691.7" width="7.0" height="7.0" rx="2.5" fill="#c9979b"/>
<rect x="664.9" y="680.0" width="6.5" height="6.5" rx="2.5" fill="#c9979b"/>
<rect x="664.9" y="692.6" width="6.5" height="6.0" rx="2.5" fill="#c9979b"/>
<rect x="680.5" y="692.6" width="6.5" height="6.0" rx="2.5" fill="#c9979b"/>
<rect x="692.0" y="692.6" width="6.5" height="6.0" rx="2.5" fill="#c9979b"/>
<rect x="705.8" y="692.6" width="6.5" height="6.0" rx="2.5" fill="#c9979b"/>
<rect x="717.0" y="692.6" width="6.5" height="6.0" rx="2.5" fill="#c9979b"/>
<rect x="731.0" y="692.6" width="6.5" height="6.0" rx="2.5" fill="#c9979b"/>
<rect x="743.0" y="692.6" width="6.5" height="6.0" rx="2.5" fill="#c9979b"/>
<rect x="533.0" y="731.4" width="7.0" height="7.0" rx="2.5" fill="#c9979b"/>
<rect x="533.0" y="744.8" width="7.0" height="7.0" rx="2.5" fill="#c9979b"/>
<rect x="544.4" y="731.4" width="7.0" height="7.0" rx="2.5" fill="#c9979b"/>
<rect x="544.4" y="744.8" width="7.0" height="7.0" rx="2.5" fill="#c9979b"/>
<rect x="746.0" y="802.4" width="6.5" height="6.0" rx="2" fill="#c9979b"/>
<rect x="758.0" y="802.4" width="6.5" height="6.0" rx="2" fill="#c9979b"/>
<circle cx="783.9" cy="804.2" r="4.9" fill="#c9979b"/>
<circle cx="777.9" cy="816.7" r="4.9" fill="#c9979b"/>
<circle cx="794.7" cy="819.5" r="4.9" fill="#c9979b"/>
<circle cx="782.0" cy="836.3" r="4.9" fill="#c9979b"/>
<circle cx="802.8" cy="833.4" r="4.9" fill="#c9979b"/>
<rect x="780.9" y="847.0" width="7.0" height="6.5" rx="2" fill="#c9979b"/>
<rect x="780.9" y="858.5" width="7.0" height="6.5" rx="2.5" fill="#c9979b"/>
<rect x="815.8" y="756.2" width="6.0" height="6.5" rx="1.5" fill="#c9979b"/>
<rect x="815.8" y="767.9" width="6.0" height="6.0" rx="2" fill="#c9979b"/>
<circle cx="837.8" cy="760.4" r="4.9" fill="#c9979b"/>
<circle cx="867.7" cy="762.3" r="4.9" fill="#c9979b"/>
<rect x="829.0" y="771.0" width="6.5" height="6.5" rx="2.5" fill="#c9979b"/>
<rect x="841.0" y="771.0" width="6.5" height="6.5" rx="2.5" fill="#c9979b"/>
<rect x="855.0" y="771.0" width="6.5" height="6.5" rx="2.5" fill="#c9979b"/>
<rect x="866.6" y="771.0" width="6.5" height="6.5" rx="2.5" fill="#c9979b"/>
<rect x="866.9" y="785.4" width="6.0" height="6.5" rx="1" fill="#c9979b"/>
<rect x="866.9" y="796.9" width="6.0" height="6.0" rx="1" fill="#c9979b"/>
<rect x="877.5" y="813.0" width="6.5" height="6.5" rx="2" fill="#c9979b"/>
<rect x="877.5" y="824.1" width="6.5" height="6.5" rx="2" fill="#c9979b"/>
<rect x="891.4" y="813.0" width="6.5" height="6.5" rx="2" fill="#c9979b"/>
<rect x="891.4" y="824.1" width="6.5" height="6.5" rx="2" fill="#c9979b"/>
<rect x="904.5" y="813.0" width="6.5" height="6.5" rx="2" fill="#c9979b"/>
<rect x="904.5" y="824.1" width="6.5" height="6.5" rx="2" fill="#c9979b"/>
<rect x="875.8" y="854.1" width="6.5" height="6.5" rx="2" fill="#c9979b"/>
<rect x="875.8" y="866.1" width="6.5" height="6.5" rx="2" fill="#c9979b"/>
<rect x="890.1" y="854.1" width="6.5" height="6.5" rx="2" fill="#c9979b"/>
<rect x="890.1" y="866.1" width="6.5" height="6.5" rx="2" fill="#c9979b"/>
<rect x="904.5" y="854.1" width="6.5" height="6.5" rx="2" fill="#c9979b"/>
<rect x="904.5" y="866.1" width="6.5" height="6.5" rx="2" fill="#c9979b"/>
<rect x="918.9" y="854.1" width="6.5" height="6.5" rx="2" fill="#c9979b"/>
<rect x="918.9" y="866.1" width="6.5" height="6.5" rx="2" fill="#c9979b"/>
<rect x="946.6" y="822.0" width="6.5" height="6.5" rx="2" fill="#c9979b"/>
<rect x="946.6" y="833.5" width="6.5" height="6.5" rx="2" fill="#c9979b"/>
<rect x="946.6" y="857.8" width="6.5" height="6.5" rx="2" fill="#c9979b"/>
<rect x="946.6" y="869.5" width="6.5" height="6.5" rx="2" fill="#c9979b"/>
<circle cx="949.9" cy="848.6" r="5.0" fill="#c9979b"/>
<rect x="965.8" y="773.1" width="7.0" height="6.5" rx="2.5" fill="#c9979b"/>
<rect x="965.8" y="784.8" width="7.0" height="6.0" rx="2.5" fill="#c9979b"/>
<rect x="1004.8" y="803.9" width="7.0" height="7.0" rx="2.5" fill="#c9979b"/>
<rect x="1004.8" y="815.4" width="7.0" height="6.5" rx="2.5" fill="#c9979b"/>
<rect x="1027.9" y="795.9" width="7.0" height="7.0" rx="2.5" fill="#c9979b"/>
<rect x="1027.9" y="808.1" width="7.0" height="6.0" rx="1.5" fill="#c9979b"/>
<rect x="559.5" y="844.0" width="6.5" height="6.5" rx="2.5" fill="#c9979b"/>
<rect x="559.5" y="855.4" width="6.5" height="6.5" rx="2.5" fill="#c9979b"/>
<rect x="574.4" y="844.0" width="6.5" height="6.5" rx="2.5" fill="#c9979b"/>
<rect x="574.4" y="855.4" width="6.5" height="6.5" rx="2.5" fill="#c9979b"/>
<rect x="590.0" y="844.0" width="6.5" height="6.5" rx="2.5" fill="#c9979b"/>
<rect x="590.0" y="855.4" width="6.5" height="6.5" rx="2.5" fill="#c9979b"/>
<rect x="605.0" y="844.0" width="6.5" height="6.5" rx="2.5" fill="#c9979b"/>
<rect x="605.0" y="855.4" width="6.5" height="6.5" rx="2.5" fill="#c9979b"/>
<rect x="620.1" y="844.0" width="6.5" height="6.5" rx="2.5" fill="#c9979b"/>
<rect x="620.1" y="855.4" width="6.5" height="6.5" rx="2.5" fill="#c9979b"/>
<rect x="635.0" y="844.0" width="6.5" height="6.5" rx="2.5" fill="#c9979b"/>
<rect x="635.0" y="855.4" width="6.5" height="6.5" rx="2.5" fill="#c9979b"/>
<rect x="655.9" y="844.0" width="6.5" height="6.5" rx="2.5" fill="#c9979b"/>
<rect x="655.9" y="855.4" width="6.5" height="6.5" rx="2.5" fill="#c9979b"/>
<rect x="680.5" y="844.0" width="6.5" height="6.5" rx="2.5" fill="#c9979b"/>
<rect x="680.5" y="855.4" width="6.5" height="6.5" rx="2.5" fill="#c9979b"/>
<rect x="697.2" y="844.0" width="6.5" height="6.5" rx="2.5" fill="#c9979b"/>
<rect x="697.2" y="855.4" width="6.5" height="6.5" rx="2.5" fill="#c9979b"/>
<path d="M440.5 936 V119 A13 13 0 0 1 453.5 106.5 H877.5 L922.5 156 V283 A14 14 0 0 0 936.5 297.5 H1200.5 L1209.5 306.5 V427.5 L1259.5 475.5 V835 L1249.5 844.5 H1167 A11 11 0 0 0 1156 855.5 V941 L1147 949.5 H739.5 L733 943 V933 A34 34 0 0 0 667 933 V943 L659.5 949.5 H453.5 A13 13 0 0 1 440.5 936.5 Z" fill="none" stroke="#f03b3b" stroke-width="1.1"/>
</svg>
<div id="drop"><div class="li" style="top:0px">All Layer</div><div class="li" style="top:16px">1, Top Layer</div><div class="li" style="top:32px">2, PADSTACK TOP</div><div class="li" style="top:48px">3, Top Solder</div><div class="li" style="top:64px">4, Top Overlay</div><div class="li" style="top:80px">5, Top Overlay-1</div><div class="li sel" style="top:96px">6, Top Paste</div><div class="li" style="top:112px">8, MECHANICAL15</div><div class="li" style="top:128px">11, Bottom Layer</div><div class="li" style="top:144px">12, PADSTACK BOTTOM</div><div class="li" style="top:160px">13, Bottom Solder</div><div class="li" style="top:176px">14, Bottom Overlay</div><div class="li" style="top:192px">15, Bottom Overlay-1</div><div class="li" style="top:208px">16, Bottom Paste</div><div class="li" style="top:224px">21, KEEPOUT</div><div class="li" style="top:240px">22, Drill Drawing</div><div class="li" style="top:256px">23, MECHANICAL2</div><div class="li" style="top:272px">81, Ground</div><div class="li" style="top:288px">82, Inner 1</div><div class="li" style="top:304px">83, Inner 2</div><div class="li" style="top:320px">84, Power</div><div class="li" style="top:336px">201, MECHANICAL14-TOP</div><div class="li" style="top:352px">211, MECHANICAL14-BOTTOM</div></div>
<div id="panel">
 <div class="abs" style="left:4px;top:0;width:216px;height:24px;border:1px solid #a8a8a8;border-radius:2px"></div>
 <div class="pt" style="left:6px;top:5px;font-size:12px;letter-spacing:0">Picking Tool</div>
 <svg class="abs" style="left:204px;top:8px" width="9" height="9"><path d="M1 1l7 7M8 1l-7 7" stroke="#555" stroke-width="1"/></svg>
 <!-- filter group -->
 <div class="abs" style="left:9px;top:36px;width:205px;height:191px;border:1px solid #c8c8c8;border-right-color:#fff;border-bottom-color:#fff;box-shadow:inset -1px -1px 0 #a0a0a0, 1px 1px 0 #fff"></div>
 <div class="pt" style="left:15px;top:30px;background:#f0f0f0;padding:0 2px">Filter</div>
 <div class="cb" style="left:18px;top:47px"></div><svg class="abs" style="left:19px;top:48px" width="11" height="11"><path d="M2 5.5l2.5 3L9 2" stroke="#000" stroke-width="1.8" fill="none"/></svg>
 <div class="pt" style="left:35px;top:47px"><u>S</u>ilk</div>
 <div class="cb" style="left:105px;top:47px"></div><svg class="abs" style="left:106px;top:48px" width="11" height="11"><path d="M2 5.5l2.5 3L9 2" stroke="#000" stroke-width="1.8" fill="none"/></svg>
 <div class="pt" style="left:122px;top:47px"><u>P</u>ad Stack / Pin</div>
 <div class="cb" style="left:18px;top:67px"></div><svg class="abs" style="left:19px;top:68px" width="11" height="11"><path d="M2 5.5l2.5 3L9 2" stroke="#000" stroke-width="1.8" fill="none"/></svg>
 <div class="pt" style="left:35px;top:67px"><u>R</u>oute</div>
 <div class="cb" style="left:105px;top:67px"></div><svg class="abs" style="left:106px;top:68px" width="11" height="11"><path d="M2 5.5l2.5 3L9 2" stroke="#000" stroke-width="1.8" fill="none"/></svg>
 <div class="pt" style="left:122px;top:67px"><u>F</u>igure</div>
 <div class="hline" style="left:11px;top:88px;width:203px"></div>
 <div class="rad" style="left:28px;top:96px"></div><div class="abs" style="left:32px;top:100px;width:4px;height:4px;border-radius:50%;background:#000"></div>
 <div class="pt" style="left:45px;top:96px">All</div>
 <div class="rad" style="left:112px;top:96px"></div>
 <div class="pt" style="left:128px;top:96px">Segment</div>
 <div class="hline" style="left:11px;top:116px;width:203px"></div>
 <div class="cb" style="left:19px;top:125px"></div>
 <div class="pt" style="left:36px;top:125px">Neighborhood Object</div>
 <div class="rad" style="left:22px;top:148px;border-color:#bbb;background:#f4f4f4"></div><div class="abs" style="left:26px;top:152px;width:4px;height:4px;border-radius:50%;background:#aaa"></div>
 <div class="pt gray" style="left:38px;top:148px">Component</div>
 <div class="rad" style="left:121px;top:148px;border-color:#bbb;background:#f4f4f4"></div>
 <div class="pt gray" style="left:137px;top:148px">Route</div>
 <div class="pt gray" style="left:23px;top:171px">Distance</div>
 <div class="abs" style="left:71px;top:168px;width:132px;height:19px;border:1px solid #fff;border-top:2px solid #7a7a7a;border-left:2px solid #7a7a7a;background:#f0f0f0"></div>
 <div class="pt gray" style="left:193px;top:171px">0</div>
 <div class="hline" style="left:11px;top:196px;width:203px"></div>
 <div class="abs" style="left:13px;top:201px;width:198px;height:21px;border:1px solid #fff;border-right:2px solid #6a6a6a;border-bottom:2px solid #6a6a6a;background:#f0f0f0"></div>
 <div class="pt" style="left:13px;top:204px;width:198px;text-align:center">Picking Layer</div>
 <!-- tree -->
 <div class="abs" style="left:6px;top:233px;width:209px;height:214px;background:#fff;border:2px solid #7a7a7a;border-right:1px solid #e8e8e8;border-bottom:1px solid #e8e8e8">
  <svg class="abs" style="left:9px;top:6px" width="12" height="104"><path d="M1.5 1V97.5M2 1.5h8M2 17.5h8M2 33.5h8M2 49.5h8M2 65.5h8M2 81.5h8M2 97.5h8" stroke="#888" stroke-dasharray="1 1" fill="none"/></svg>
  <div class="abs" style="left:0;top:0"><div class="ti" style="top:0px">Component</div><div class="ti" style="top:16px">CompFigure</div><div class="ti" style="top:32px">Pin</div><div class="ti" style="top:48px">Route</div><div class="ti" style="top:64px">Route - Via</div><div class="ti" style="top:80px">Route - Pad</div><div class="ti" style="top:96px">Figure</div></div>
 </div>
 <!-- property -->
 <div class="abs" style="left:9px;top:459px;width:205px;height:475px;border:1px solid #a0a0a0;box-shadow:1px 1px 0 #fff, inset 1px 1px 0 #fff"></div>
 <div class="pt" style="left:15px;top:452px;background:#f0f0f0;padding:0 2px">Property</div>
 <div class="abs" style="left:16px;top:469px;width:191px;height:450px;border-top:2px solid #6a6a6a;border-left:2px solid #6a6a6a;border-right:1px solid #fff;border-bottom:1px solid #fff;background:#f0f0f0"></div>
 <div class="abs" style="left:18px;top:471px;width:172px;height:432px;border-right:1px solid #fff;border-bottom:1px solid #fff"></div>
 <svg class="abs" style="left:193px;top:476px" width="9" height="6"><path d="M1 5l3.5-3.5L8 5" stroke="#b0b0b0" stroke-width="1.5" fill="none"/></svg>
 <svg class="abs" style="left:193px;top:890px" width="9" height="6"><path d="M1 1l3.5 3.5L8 1" stroke="#b0b0b0" stroke-width="1.5" fill="none"/></svg>
 <svg class="abs" style="left:23px;top:905px" width="6" height="9"><path d="M5 1L1.5 4.5 5 8" stroke="#b0b0b0" stroke-width="1.5" fill="none"/></svg>
 <svg class="abs" style="left:178px;top:905px" width="6" height="9"><path d="M1 1l3.5 3.5L1 8" stroke="#b0b0b0" stroke-width="1.5" fill="none"/></svg>
</div>
<div id="status">
 <div class="st" style="left:2px;top:5px">Ready</div>
 <div class="sp" style="left:678px;width:306px"></div>
 <div class="sp" style="left:986px;width:506px"></div>
 <div class="sp" style="left:1494px;width:256px"></div>
 <div class="sp" style="left:1752px;width:66px"></div>
 <div class="sp" style="left:1820px;width:29px"></div>
 <div class="sp" style="left:1851px;width:34px"></div>
 <div class="sp" style="left:1887px;width:33px"></div>
 <div class="st" style="left:1495px;top:5px">x :</div><div class="st" style="left:1521.5px;top:5px">-1.05</div>
 <div class="st" style="left:1558.5px;top:5px">y :</div><div class="st" style="left:1584.5px;top:5px;letter-spacing:.2px">69.06</div>
 <div class="st" style="left:1754px;top:5px">mm</div>
 <div class="st" style="left:1852px;top:5px">NUM</div>
</div>
</body></html>
